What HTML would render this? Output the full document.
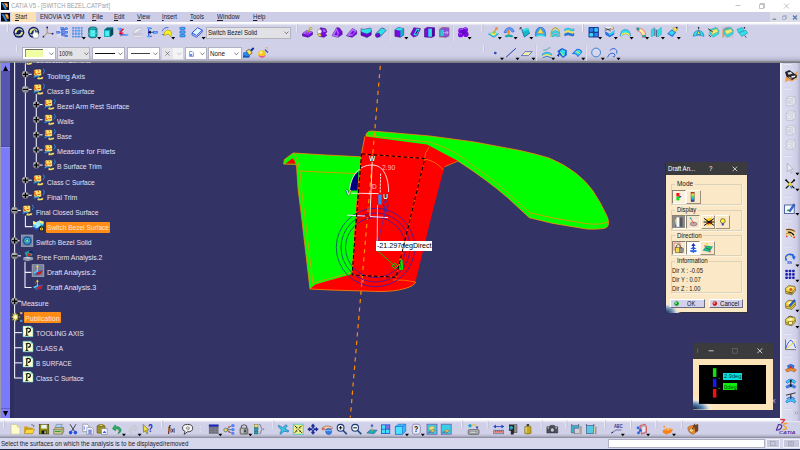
<!DOCTYPE html>
<html lang="en">
<head>
<meta charset="utf-8">
<title>CATIA V5 - [SWITCH BEZEL.CATPart]</title>
<style>
html,body{margin:0;padding:0;}
body{width:800px;height:450px;overflow:hidden;background:#333366;font-family:"Liberation Sans", sans-serif;}
#app{position:relative;width:800px;height:450px;overflow:hidden;background:#333366;}
#app div,#app span,#app svg{box-sizing:border-box;}
svg{overflow:visible;}
</style>
</head>
<body>
<div id="app">
<!-- viewport background -->
<div id="viewport" style="position:absolute;left:0;top:62px;width:780px;height:356px;background:#333366;"></div>
<!-- title bar -->
<div id="titlebar" style="position:absolute;left:0;top:0;width:800px;height:12px;background:#ffffff;"><svg style="position:absolute;left:1px;top:2px" width="8" height="8" viewBox="0 0 8 8"><rect width="8" height="8" fill="#0a0a14"/><path d="M0.5 1 L3 1.5 L6 7.5 L4 7.5 Z" fill="#2a8ae6"/><path d="M3 1 L6.5 1.5 L7 5 L5.5 5.5 Z" fill="#f08a20"/><path d="M4 2 L6 2.5 L6 4 Z" fill="#ffd890"/></svg><span style="position:absolute;left:11.3px;top:1.40px;font-size:7px;line-height:9px;color:#a0a0a0;font-weight:400;white-space:pre;transform:scaleX(0.8228);transform-origin:0 0;">CATIA V5 - [SWITCH BEZEL.CATPart]</span><svg style="position:absolute;left:730px;top:0" width="70" height="12" viewBox="0 0 70 12"><path d="M5.5 5.5 H10.5" stroke="#9a9a9a" stroke-width="0.6" fill="none"/><path d="M29.5 4.5 h4 v4 h-4 z M30.5 4.5 v-1 h4 v4 h-1" stroke="#9a9a9a" stroke-width="0.6" fill="none"/><path d="M54 3.5 l5 5 M59 3.5 l-5 5" stroke="#9a9a9a" stroke-width="0.6" fill="none"/></svg></div>
<!-- menu bar -->
<div id="menubar" style="position:absolute;left:0;top:12px;width:800px;height:10.5px;background:#cdcde8;"><svg style="position:absolute;left:1px;top:1px" width="9" height="8.5" viewBox="0 0 9 8.5"><rect width="9" height="8.5" fill="#0a0a14"/><path d="M0.5 1 L3 1.5 L6.5 8 L4.5 8 Z" fill="#2a8ae6"/><path d="M3.5 1 L7 1.5 L8 5.5 L6 6 Z" fill="#f08a20"/><path d="M4.5 2 L6.5 2.5 L6.5 4.5 Z" fill="#ffd890"/></svg><div style="position:absolute;left:11px;top:0;width:25px;height:10.5px;background:#fde0b4;"></div><div style="position:absolute;left:770px;top:0;width:30px;height:10.5px;background:#dcdce8;"></div><svg style="position:absolute;left:770px;top:0" width="30" height="11" viewBox="0 0 30 11"><path d="M2.6 7.2 h3.6" stroke="#6078a8" stroke-width="1.1" fill="none"/><path d="M12.5 4.5 h3 v3 h-3 z M13.5 4.5 v-1 h3 v3 h-1" stroke="#8c9cbc" stroke-width="0.6" fill="none"/><path d="M23 3.5 l4 4 M27 3.5 l-4 4" stroke="#5078a8" stroke-width="1.1" fill="none"/></svg></div><span style="position:absolute;left:14.7px;top:12.40px;font-size:7.2px;line-height:9.2px;color:#1a1a2a;font-weight:400;white-space:pre;transform:scaleX(0.8033);transform-origin:0 0;"><u>S</u>tart</span><span style="position:absolute;left:39.8px;top:12.40px;font-size:7.2px;line-height:9.2px;color:#1a1a2a;font-weight:400;white-space:pre;transform:scaleX(0.8073);transform-origin:0 0;">ENOVIA V5 VPM</span><span style="position:absolute;left:92px;top:12.40px;font-size:7.2px;line-height:9.2px;color:#1a1a2a;font-weight:400;white-space:pre;transform:scaleX(0.9488);transform-origin:0 0;"><u>F</u>ile</span><span style="position:absolute;left:113.5px;top:12.40px;font-size:7.2px;line-height:9.2px;color:#1a1a2a;font-weight:400;white-space:pre;transform:scaleX(0.8474);transform-origin:0 0;"><u>E</u>dit</span><span style="position:absolute;left:136.5px;top:12.40px;font-size:7.2px;line-height:9.2px;color:#1a1a2a;font-weight:400;white-space:pre;transform:scaleX(0.8413);transform-origin:0 0;"><u>V</u>iew</span><span style="position:absolute;left:162px;top:12.40px;font-size:7.2px;line-height:9.2px;color:#1a1a2a;font-weight:400;white-space:pre;transform:scaleX(0.8341);transform-origin:0 0;"><u>I</u>nsert</span><span style="position:absolute;left:190px;top:12.40px;font-size:7.2px;line-height:9.2px;color:#1a1a2a;font-weight:400;white-space:pre;transform:scaleX(0.8343);transform-origin:0 0;"><u>T</u>ools</span><span style="position:absolute;left:217px;top:12.40px;font-size:7.2px;line-height:9.2px;color:#1a1a2a;font-weight:400;white-space:pre;transform:scaleX(0.8797);transform-origin:0 0;"><u>W</u>indow</span><span style="position:absolute;left:252.5px;top:12.40px;font-size:7.2px;line-height:9.2px;color:#1a1a2a;font-weight:400;white-space:pre;transform:scaleX(0.8448);transform-origin:0 0;"><u>H</u>elp</span>
<!-- toolbar backgrounds -->
<div id="toolbar-top" style="position:absolute;left:0;top:22px;width:800px;height:40.6px;background:linear-gradient(to bottom,#ffffff 0,#ffffff 1.2px,#e4e4f2 2.4px,#d0d0e8 3.8px,#d0d0e8 33px,#c4c4dc 36px,#b0b0c8 38.4px,#8c8c98 39.2px,#7c7c84 40.6px);"></div><div id="toolbar-bottom" style="position:absolute;left:0;top:417.7px;width:800px;height:20.6px;background:linear-gradient(to bottom,#ffffff 0,#ffffff 2px,#e6e6f4 3.4px,#d0d0e8 4.8px,#d0d0e8 15.6px,#bcbcd2 17.6px,#a0a0b4 19px,#8a8a98 19.8px,#b4b4c8 20.6px);"></div><div id="toolbar-right" style="position:absolute;left:779.8px;top:62.6px;width:20.2px;height:358.6px;background:linear-gradient(to right,#ffffff 0,#f4f4fc 1.2px,#dcdcf0 2.6px,#d6d6ee 12px,#ccccE4 17px,#b0b0c8 20.2px);"></div><div id="statusbar" style="position:absolute;left:0;top:438.3px;width:800px;height:11.7px;background:#d6d6ec;"></div>
<!-- 3D model -->
<svg style="position:absolute;left:0px;top:0px;pointer-events:none" width="800" height="450" viewBox="0 0 800 450"><path d="M283.6,164 L284.3,159.6 L293.2,153 L326,155 L361.3,156.8 L358,187 L355.5,220 L352,274.5 L315.5,284.5 L310,289 L301,212 L298.2,190 L297,173 Q296.8,166 296,164.4 Z" fill="#00ff00" stroke="#ff8c00" stroke-width="0.8" stroke-linejoin="round"/><path d="M285.6,163.4 L292.7,158.2 Q294.6,160 295.5,163.8 Z" fill="#ff0000"/><path d="M293.4,153.4 Q297,157 297.9,162 Q299.6,168 300,171.5 L301.6,190 L304.5,213 L313,284" stroke="#ff8c00" stroke-width="0.7" fill="none"/><path d="M300,171 L326,172.3 L357.5,173.6" stroke="#ff8c00" stroke-width="0.8" fill="none"/><path d="M313,283 L351.5,272.3" stroke="#ff8c00" stroke-width="0.6" fill="none"/><path d="M366,134 Q368,130.5 372,131 L430,136 L474.4,142 L520,150.5 Q536,154 549,158 Q564,164 575.5,173 Q586,181 593,191 Q601,203 606.7,215.5 Q609,220 608.4,224 Q608,228 603,228.6 Q596,229.5 586.7,229 L553,223.4 L529.4,217.8 L507.8,197.8 Q497,188.5 485.5,180 Q472,170 458,161 L430,148 L366,137 Z" fill="#00ff00" stroke="#ff8c00" stroke-width="0.8" stroke-linejoin="round"/><path d="M529.4,217.8 L530,212.8 L553,218 L586,223.6 Q600,225.4 608.4,221.6" stroke="#ff8c00" stroke-width="0.8" fill="none"/><path d="M366,135.5 L430,142.2 Q442,146 452,151 Q464,158 474.4,166.7 Q490,177 503.3,188.9 L530,212.8" stroke="#ff8c00" stroke-width="0.7" fill="none"/><path d="M364.5,136.5 L366,136.5 L427,144.5 L458,161 L444.5,166.8 L433,210 L415.5,282 Q414,286 405,288.5 Q395,291.5 380,291.5 L330,290 L310,289 L315.5,284.5 L352,274 L355.5,220 L358,187 L361.4,155 Z" fill="#ff0000"/><path d="M310,289 L330,290 L380,291.5 Q395,291.5 405,288.5 Q414,286 415.5,282" stroke="#ff8c00" stroke-width="0.8" fill="none"/><path d="M393,280 Q405,279.5 415.5,282" stroke="#ff8c00" stroke-width="0.7" fill="none"/><path d="M364.8,136.5 L361.6,153.5" stroke="#ff8c00" stroke-width="0.8" fill="none"/><path d="M429,147.5 Q425,152 424.4,159 Q436,161 443.5,170" stroke="#ff8c00" stroke-width="0.7" fill="none"/><path d="M444.5,166.8 L458,161" stroke="#ff8c00" stroke-width="0.7" fill="none"/><path d="M380.3,65.8 L350.3,417.5" stroke="#ff8c00" stroke-width="1.2" stroke-dasharray="4.2 4.16" fill="none"/><defs><clipPath id="clipG"><path d="M280,150 L361.6,153 L352,275 L310,290 Z"/></clipPath><clipPath id="clipR"><path d="M361.6,153 L460,150 L440,300 L310,300 L310,290 L352,275 Z"/></clipPath></defs><g fill="none" stroke="#0c6c54" stroke-width="1" clip-path="url(#clipG)"><circle cx="375.5" cy="247.5" r="30"/><circle cx="375.5" cy="247.5" r="34.5"/><circle cx="375.5" cy="247.5" r="39.2"/></g><g fill="none" stroke="#3020a8" stroke-width="0.8" clip-path="url(#clipR)"><circle cx="375.5" cy="247.5" r="30"/><circle cx="375.5" cy="247.5" r="34.5"/><circle cx="375.5" cy="247.5" r="39.2"/></g><path d="M358.5,171.5 Q351,176 349.5,190.5 L357.5,190.5 Z" fill="#000080"/><g fill="none" stroke="#fff0f4" stroke-width="0.9"><path d="M349.5,191 C351,174 360,165 372,165 C383,165 388.5,176 388.6,192"/><path d="M372.2,162 L370,216"/><path d="M351,193.2 L378.5,193.6"/></g><path d="M380.6,173.5 L380.2,193" stroke="#ffe8e8" stroke-width="0.9" stroke-dasharray="2.5 0.8" fill="none"/><path d="M377.5,205 L377.2,241" stroke="#ffe8ec" stroke-width="0.8" fill="none"/><g fill="none" stroke="#f0e0ff" stroke-width="1"><path d="M347,215.2 L365,216"/><path d="M370,216.5 L388,217.6"/></g><circle cx="367.5" cy="216" r="1.3" fill="#c00000"/><rect x="378.3" y="194.6" width="3.2" height="10" fill="#2a90ff"/><path d="M385.8,199 L388.5,206 L387,206 L386.5,212 L384.3,212 L384.6,206 L383,206 Z" fill="none" stroke="#2030c0" stroke-width="0.7"/><path d="M385.3,212 L377.5,243" stroke="#3838c8" stroke-width="0.7" fill="none"/><path d="M361,279.5 l3,3 m0,-3 l-3,3" stroke="#ffc0c0" stroke-width="0.6" fill="none"/><path d="M377.5,250.5 L396,267" stroke="#00d000" stroke-width="0.9" fill="none"/><path d="M391.8,266 l3.2,-2.8 l3.2,2.8 l-3.2,2.8 z" fill="none" stroke="#00e000" stroke-width="0.9"/><path d="M398.8,259.6 l3.6,0 l0.8,10 l-3.6,0.6 z" fill="#00f000"/><path d="M399.6,261 L401.4,268.6" stroke="#006000" stroke-width="0.7" fill="none"/></svg><span style="position:absolute;left:368.8px;top:153.70px;font-size:7px;line-height:9px;color:#fff;font-weight:700;white-space:pre;transform:scaleX(0.9381);transform-origin:0 0;text-shadow:0 0 1px #000,0 0 1px #000;">W</span><span style="position:absolute;left:346px;top:187.50px;font-size:7px;line-height:9px;color:#fff;font-weight:700;white-space:pre;transform:scaleX(1.0702);transform-origin:0 0;text-shadow:0 0 1px #000,0 0 1px #000;">V</span><span style="position:absolute;left:383.2px;top:191.50px;font-size:7px;line-height:9px;color:#fff;font-weight:700;white-space:pre;transform:scaleX(0.9877);transform-origin:0 0;text-shadow:0 0 1px #000,0 0 1px #000;">U</span><span style="position:absolute;left:372px;top:182.45px;font-size:7.5px;line-height:9.5px;color:#ffc8c8;font-weight:400;white-space:pre;transform:scaleX(0.8484);transform-origin:0 0;">D</span><span style="position:absolute;left:381.8px;top:162.65px;font-size:7.5px;line-height:9.5px;color:#ffb8b8;font-weight:400;white-space:pre;transform:scaleX(0.9035);transform-origin:0 0;">2.90</span><div style="position:absolute;left:376px;top:240.5px;width:56px;height:10px;background:#ffffff;"></div><span style="position:absolute;left:376.8px;top:240.85px;font-size:7.5px;line-height:9.5px;color:#000;font-weight:400;white-space:pre;transform:scaleX(0.9471);transform-origin:0 0;">-21.297degDirect</span><svg style="position:absolute;left:0px;top:0px;pointer-events:none" width="800" height="450" viewBox="0 0 800 450"><path d="M361.5,153.9 L424.8,158.5 L396,277.3 L352,275 Z" stroke="#000" stroke-width="1" stroke-dasharray="4 2" fill="none"/><path d="M361.5,153.9 L424.8,158.5 L396,277.3 L352,275 Z" stroke="#ff8c00" stroke-width="0.6" stroke-dasharray="2 4" stroke-dashoffset="-4" fill="none"/></svg>
<!-- specification tree -->
<div id="tree-scroll" style="position:absolute;left:0;top:62.6px;width:10.1px;height:355.1px;background:#5656b0;border-left:1px solid #9c9ca8;"><div class="scroll-up" style="position:absolute;left:0;top:0;width:9.1px;height:9.6px;background:#8080f8;border-bottom:0.6px solid #5050a8;"></div><div class="scroll-thumb" style="position:absolute;left:0;top:84.2px;width:9.1px;height:261.4px;background:#7a7afa;border-top:0.9px solid #9494ff;box-shadow:0 -0.8px 0 #4848a0;"></div><div class="scroll-down" style="position:absolute;left:0;top:345.4px;width:9.1px;height:9.7px;background:#7e7efa;border-top:0.6px solid #6060c8;"></div><svg style="position:absolute;left:-1px;top:0" width="10" height="355" viewBox="0 0 10 355"><path d="M3,8 L5.5,2.8 L8.1,8 Z" fill="#000"/><path d="M3,348.1 L5.5,353.3 L8.1,348.1 Z" fill="#000"/></svg></div><div style="position:absolute;left:10.1px;top:62.6px;width:3.6px;height:355.1px;background:#2e2e60;"></div><svg style="position:absolute;left:0px;top:0px;pointer-events:none" width="800" height="450" viewBox="0 0 800 450"><path d="M14.6,62.5 V378.3" stroke="#eeeeff" stroke-width="1.1" fill="none"/><path d="M25.4,62.5 V196.74" stroke="#eeeeff" stroke-width="1.1" fill="none"/><path d="M36.3,93.83 V166.48000000000002" stroke="#eeeeff" stroke-width="1.1" fill="none"/><path d="M25.4,215.87 V226.6 H32.5" stroke="#eeeeff" stroke-width="1.1" fill="none"/><path d="M25.0,261.76 V287.52000000000004 H31.5 M25.0,272.39 H31.5" stroke="#eeeeff" stroke-width="1.1" fill="none"/><path d="M14.6,332.61 H22" stroke="#eeeeff" stroke-width="1.1" fill="none"/><path d="M14.6,347.74 H22" stroke="#eeeeff" stroke-width="1.1" fill="none"/><path d="M14.6,362.87 H22" stroke="#eeeeff" stroke-width="1.1" fill="none"/><path d="M14.6,378.0 H22" stroke="#eeeeff" stroke-width="1.1" fill="none"/><path d="M28.4,74.3 H31.699999999999996" stroke="#eeeeff" stroke-width="1.1" fill="none"/><circle cx="25.4" cy="74.3" r="3.4" fill="#8a8a8a"/><circle cx="24.799999999999997" cy="73.5" r="2.4" fill="#b4b4b4"/><path d="M22.799999999999997,74.3 H28.0" stroke="#000" stroke-width="1.3"/><path d="M25.4,71.7 V76.89999999999999" stroke="#000" stroke-width="1.3"/><g transform="translate(33.3,69.10) scale(1.06)"><path d="M0.4,1.6 Q0.2,0.2 2,0.1 L6.4,-0.1 Q7.8,0 7.8,1.6 L7.9,6 Q6,7 4,6.6 Q2,7 0.5,6.2 Z" fill="#ffe868" stroke="#1c1c58" stroke-width="0.6"/><path d="M3.4,8.2 Q5,6.8 6.6,7.6 L9.8,7 L9.4,9.4 Q6,10.6 3.8,9.8 Z" fill="#ffe868" stroke="#1c1c58" stroke-width="0.6"/><path d="M1.7,1.4 Q0.9,3 1.8,4.6 L3.2,5" stroke="#e04a10" stroke-width="1.1" fill="none"/><path d="M4.6,0.8 L5.2,2.2 M4,3.8 Q5.4,4.6 6.8,3.6" stroke="#e84818" stroke-width="0.9" fill="none"/><path d="M0.4,7.8 Q2.4,6.2 5.4,6.6" stroke="#30a0e0" stroke-width="1.1" fill="none"/><path d="M1.4,8.8 L3,7.6 M5.8,8.6 L6.8,7.6" stroke="#1838a0" stroke-width="0.7" fill="none"/><path d="M9.6,-0.4 Q11.6,2 9.2,4.6" stroke="#3090d8" stroke-width="0.9" fill="none"/></g><path d="M28.4,89.42999999999999 H31.699999999999996" stroke="#eeeeff" stroke-width="1.1" fill="none"/><circle cx="25.4" cy="89.42999999999999" r="3.4" fill="#8a8a8a"/><circle cx="24.799999999999997" cy="88.63" r="2.4" fill="#b4b4b4"/><path d="M22.799999999999997,89.42999999999999 H28.0" stroke="#000" stroke-width="1.3"/><g transform="translate(33.3,84.23) scale(1.06)"><path d="M0.4,1.6 Q0.2,0.2 2,0.1 L6.4,-0.1 Q7.8,0 7.8,1.6 L7.9,6 Q6,7 4,6.6 Q2,7 0.5,6.2 Z" fill="#ffe868" stroke="#1c1c58" stroke-width="0.6"/><path d="M3.4,8.2 Q5,6.8 6.6,7.6 L9.8,7 L9.4,9.4 Q6,10.6 3.8,9.8 Z" fill="#ffe868" stroke="#1c1c58" stroke-width="0.6"/><path d="M1.7,1.4 Q0.9,3 1.8,4.6 L3.2,5" stroke="#e04a10" stroke-width="1.1" fill="none"/><path d="M4.6,0.8 L5.2,2.2 M4,3.8 Q5.4,4.6 6.8,3.6" stroke="#e84818" stroke-width="0.9" fill="none"/><path d="M0.4,7.8 Q2.4,6.2 5.4,6.6" stroke="#30a0e0" stroke-width="1.1" fill="none"/><path d="M1.4,8.8 L3,7.6 M5.8,8.6 L6.8,7.6" stroke="#1838a0" stroke-width="0.7" fill="none"/><path d="M9.6,-0.4 Q11.6,2 9.2,4.6" stroke="#3090d8" stroke-width="0.9" fill="none"/></g><path d="M39.3,104.56 H42.6" stroke="#eeeeff" stroke-width="1.1" fill="none"/><circle cx="36.3" cy="104.56" r="3.4" fill="#8a8a8a"/><circle cx="35.699999999999996" cy="103.76" r="2.4" fill="#b4b4b4"/><path d="M33.699999999999996,104.56 H38.9" stroke="#000" stroke-width="1.3"/><path d="M36.3,101.96000000000001 V107.16" stroke="#000" stroke-width="1.3"/><g transform="translate(44.2,99.36) scale(1.06)"><path d="M0.4,1.6 Q0.2,0.2 2,0.1 L6.4,-0.1 Q7.8,0 7.8,1.6 L7.9,6 Q6,7 4,6.6 Q2,7 0.5,6.2 Z" fill="#ffe868" stroke="#1c1c58" stroke-width="0.6"/><path d="M3.4,8.2 Q5,6.8 6.6,7.6 L9.8,7 L9.4,9.4 Q6,10.6 3.8,9.8 Z" fill="#ffe868" stroke="#1c1c58" stroke-width="0.6"/><path d="M1.7,1.4 Q0.9,3 1.8,4.6 L3.2,5" stroke="#e04a10" stroke-width="1.1" fill="none"/><path d="M4.6,0.8 L5.2,2.2 M4,3.8 Q5.4,4.6 6.8,3.6" stroke="#e84818" stroke-width="0.9" fill="none"/><path d="M0.4,7.8 Q2.4,6.2 5.4,6.6" stroke="#30a0e0" stroke-width="1.1" fill="none"/><path d="M1.4,8.8 L3,7.6 M5.8,8.6 L6.8,7.6" stroke="#1838a0" stroke-width="0.7" fill="none"/><path d="M9.6,-0.4 Q11.6,2 9.2,4.6" stroke="#3090d8" stroke-width="0.9" fill="none"/></g><path d="M39.3,119.69 H42.6" stroke="#eeeeff" stroke-width="1.1" fill="none"/><circle cx="36.3" cy="119.69" r="3.4" fill="#8a8a8a"/><circle cx="35.699999999999996" cy="118.89" r="2.4" fill="#b4b4b4"/><path d="M33.699999999999996,119.69 H38.9" stroke="#000" stroke-width="1.3"/><path d="M36.3,117.09 V122.28999999999999" stroke="#000" stroke-width="1.3"/><g transform="translate(44.2,114.49) scale(1.06)"><path d="M0.4,1.6 Q0.2,0.2 2,0.1 L6.4,-0.1 Q7.8,0 7.8,1.6 L7.9,6 Q6,7 4,6.6 Q2,7 0.5,6.2 Z" fill="#ffe868" stroke="#1c1c58" stroke-width="0.6"/><path d="M3.4,8.2 Q5,6.8 6.6,7.6 L9.8,7 L9.4,9.4 Q6,10.6 3.8,9.8 Z" fill="#ffe868" stroke="#1c1c58" stroke-width="0.6"/><path d="M1.7,1.4 Q0.9,3 1.8,4.6 L3.2,5" stroke="#e04a10" stroke-width="1.1" fill="none"/><path d="M4.6,0.8 L5.2,2.2 M4,3.8 Q5.4,4.6 6.8,3.6" stroke="#e84818" stroke-width="0.9" fill="none"/><path d="M0.4,7.8 Q2.4,6.2 5.4,6.6" stroke="#30a0e0" stroke-width="1.1" fill="none"/><path d="M1.4,8.8 L3,7.6 M5.8,8.6 L6.8,7.6" stroke="#1838a0" stroke-width="0.7" fill="none"/><path d="M9.6,-0.4 Q11.6,2 9.2,4.6" stroke="#3090d8" stroke-width="0.9" fill="none"/></g><path d="M39.3,134.82 H42.6" stroke="#eeeeff" stroke-width="1.1" fill="none"/><circle cx="36.3" cy="134.82" r="3.4" fill="#8a8a8a"/><circle cx="35.699999999999996" cy="134.01999999999998" r="2.4" fill="#b4b4b4"/><path d="M33.699999999999996,134.82 H38.9" stroke="#000" stroke-width="1.3"/><path d="M36.3,132.22 V137.42" stroke="#000" stroke-width="1.3"/><g transform="translate(44.2,129.62) scale(1.06)"><path d="M0.4,1.6 Q0.2,0.2 2,0.1 L6.4,-0.1 Q7.8,0 7.8,1.6 L7.9,6 Q6,7 4,6.6 Q2,7 0.5,6.2 Z" fill="#ffe868" stroke="#1c1c58" stroke-width="0.6"/><path d="M3.4,8.2 Q5,6.8 6.6,7.6 L9.8,7 L9.4,9.4 Q6,10.6 3.8,9.8 Z" fill="#ffe868" stroke="#1c1c58" stroke-width="0.6"/><path d="M1.7,1.4 Q0.9,3 1.8,4.6 L3.2,5" stroke="#e04a10" stroke-width="1.1" fill="none"/><path d="M4.6,0.8 L5.2,2.2 M4,3.8 Q5.4,4.6 6.8,3.6" stroke="#e84818" stroke-width="0.9" fill="none"/><path d="M0.4,7.8 Q2.4,6.2 5.4,6.6" stroke="#30a0e0" stroke-width="1.1" fill="none"/><path d="M1.4,8.8 L3,7.6 M5.8,8.6 L6.8,7.6" stroke="#1838a0" stroke-width="0.7" fill="none"/><path d="M9.6,-0.4 Q11.6,2 9.2,4.6" stroke="#3090d8" stroke-width="0.9" fill="none"/></g><path d="M39.3,149.95000000000002 H42.6" stroke="#eeeeff" stroke-width="1.1" fill="none"/><circle cx="36.3" cy="149.95000000000002" r="3.4" fill="#8a8a8a"/><circle cx="35.699999999999996" cy="149.15" r="2.4" fill="#b4b4b4"/><path d="M33.699999999999996,149.95000000000002 H38.9" stroke="#000" stroke-width="1.3"/><path d="M36.3,147.35000000000002 V152.55" stroke="#000" stroke-width="1.3"/><g transform="translate(44.2,144.75) scale(1.06)"><path d="M0.4,1.6 Q0.2,0.2 2,0.1 L6.4,-0.1 Q7.8,0 7.8,1.6 L7.9,6 Q6,7 4,6.6 Q2,7 0.5,6.2 Z" fill="#ffe868" stroke="#1c1c58" stroke-width="0.6"/><path d="M3.4,8.2 Q5,6.8 6.6,7.6 L9.8,7 L9.4,9.4 Q6,10.6 3.8,9.8 Z" fill="#ffe868" stroke="#1c1c58" stroke-width="0.6"/><path d="M1.7,1.4 Q0.9,3 1.8,4.6 L3.2,5" stroke="#e04a10" stroke-width="1.1" fill="none"/><path d="M4.6,0.8 L5.2,2.2 M4,3.8 Q5.4,4.6 6.8,3.6" stroke="#e84818" stroke-width="0.9" fill="none"/><path d="M0.4,7.8 Q2.4,6.2 5.4,6.6" stroke="#30a0e0" stroke-width="1.1" fill="none"/><path d="M1.4,8.8 L3,7.6 M5.8,8.6 L6.8,7.6" stroke="#1838a0" stroke-width="0.7" fill="none"/><path d="M9.6,-0.4 Q11.6,2 9.2,4.6" stroke="#3090d8" stroke-width="0.9" fill="none"/></g><path d="M39.3,165.08 H42.6" stroke="#eeeeff" stroke-width="1.1" fill="none"/><circle cx="36.3" cy="165.08" r="3.4" fill="#8a8a8a"/><circle cx="35.699999999999996" cy="164.28" r="2.4" fill="#b4b4b4"/><path d="M33.699999999999996,165.08 H38.9" stroke="#000" stroke-width="1.3"/><path d="M36.3,162.48000000000002 V167.68" stroke="#000" stroke-width="1.3"/><g transform="translate(44.2,159.88) scale(1.06)"><path d="M0.4,1.6 Q0.2,0.2 2,0.1 L6.4,-0.1 Q7.8,0 7.8,1.6 L7.9,6 Q6,7 4,6.6 Q2,7 0.5,6.2 Z" fill="#ffe868" stroke="#1c1c58" stroke-width="0.6"/><path d="M3.4,8.2 Q5,6.8 6.6,7.6 L9.8,7 L9.4,9.4 Q6,10.6 3.8,9.8 Z" fill="#ffe868" stroke="#1c1c58" stroke-width="0.6"/><path d="M1.7,1.4 Q0.9,3 1.8,4.6 L3.2,5" stroke="#e04a10" stroke-width="1.1" fill="none"/><path d="M4.6,0.8 L5.2,2.2 M4,3.8 Q5.4,4.6 6.8,3.6" stroke="#e84818" stroke-width="0.9" fill="none"/><path d="M0.4,7.8 Q2.4,6.2 5.4,6.6" stroke="#30a0e0" stroke-width="1.1" fill="none"/><path d="M1.4,8.8 L3,7.6 M5.8,8.6 L6.8,7.6" stroke="#1838a0" stroke-width="0.7" fill="none"/><path d="M9.6,-0.4 Q11.6,2 9.2,4.6" stroke="#3090d8" stroke-width="0.9" fill="none"/></g><path d="M28.4,180.21 H31.699999999999996" stroke="#eeeeff" stroke-width="1.1" fill="none"/><circle cx="25.4" cy="180.21" r="3.4" fill="#8a8a8a"/><circle cx="24.799999999999997" cy="179.41" r="2.4" fill="#b4b4b4"/><path d="M22.799999999999997,180.21 H28.0" stroke="#000" stroke-width="1.3"/><path d="M25.4,177.61 V182.81" stroke="#000" stroke-width="1.3"/><g transform="translate(33.3,175.01) scale(1.06)"><path d="M0.4,1.6 Q0.2,0.2 2,0.1 L6.4,-0.1 Q7.8,0 7.8,1.6 L7.9,6 Q6,7 4,6.6 Q2,7 0.5,6.2 Z" fill="#ffe868" stroke="#1c1c58" stroke-width="0.6"/><path d="M3.4,8.2 Q5,6.8 6.6,7.6 L9.8,7 L9.4,9.4 Q6,10.6 3.8,9.8 Z" fill="#ffe868" stroke="#1c1c58" stroke-width="0.6"/><path d="M1.7,1.4 Q0.9,3 1.8,4.6 L3.2,5" stroke="#e04a10" stroke-width="1.1" fill="none"/><path d="M4.6,0.8 L5.2,2.2 M4,3.8 Q5.4,4.6 6.8,3.6" stroke="#e84818" stroke-width="0.9" fill="none"/><path d="M0.4,7.8 Q2.4,6.2 5.4,6.6" stroke="#30a0e0" stroke-width="1.1" fill="none"/><path d="M1.4,8.8 L3,7.6 M5.8,8.6 L6.8,7.6" stroke="#1838a0" stroke-width="0.7" fill="none"/><path d="M9.6,-0.4 Q11.6,2 9.2,4.6" stroke="#3090d8" stroke-width="0.9" fill="none"/></g><path d="M28.4,195.34 H31.699999999999996" stroke="#eeeeff" stroke-width="1.1" fill="none"/><circle cx="25.4" cy="195.34" r="3.4" fill="#8a8a8a"/><circle cx="24.799999999999997" cy="194.54" r="2.4" fill="#b4b4b4"/><path d="M22.799999999999997,195.34 H28.0" stroke="#000" stroke-width="1.3"/><path d="M25.4,192.74 V197.94" stroke="#000" stroke-width="1.3"/><g transform="translate(33.3,190.14) scale(1.06)"><path d="M0.4,1.6 Q0.2,0.2 2,0.1 L6.4,-0.1 Q7.8,0 7.8,1.6 L7.9,6 Q6,7 4,6.6 Q2,7 0.5,6.2 Z" fill="#ffe868" stroke="#1c1c58" stroke-width="0.6"/><path d="M3.4,8.2 Q5,6.8 6.6,7.6 L9.8,7 L9.4,9.4 Q6,10.6 3.8,9.8 Z" fill="#ffe868" stroke="#1c1c58" stroke-width="0.6"/><path d="M1.7,1.4 Q0.9,3 1.8,4.6 L3.2,5" stroke="#e04a10" stroke-width="1.1" fill="none"/><path d="M4.6,0.8 L5.2,2.2 M4,3.8 Q5.4,4.6 6.8,3.6" stroke="#e84818" stroke-width="0.9" fill="none"/><path d="M0.4,7.8 Q2.4,6.2 5.4,6.6" stroke="#30a0e0" stroke-width="1.1" fill="none"/><path d="M1.4,8.8 L3,7.6 M5.8,8.6 L6.8,7.6" stroke="#1838a0" stroke-width="0.7" fill="none"/><path d="M9.6,-0.4 Q11.6,2 9.2,4.6" stroke="#3090d8" stroke-width="0.9" fill="none"/></g><path d="M17.6,210.47 H20.7" stroke="#eeeeff" stroke-width="1.1" fill="none"/><circle cx="14.6" cy="210.47" r="3.4" fill="#8a8a8a"/><circle cx="14.0" cy="209.67" r="2.4" fill="#b4b4b4"/><path d="M12.0,210.47 H17.2" stroke="#000" stroke-width="1.3"/><g transform="translate(22.3,205.27) scale(1.06)"><path d="M0.4,1.6 Q0.2,0.2 2,0.1 L6.4,-0.1 Q7.8,0 7.8,1.6 L7.9,6 Q6,7 4,6.6 Q2,7 0.5,6.2 Z" fill="#ffe868" stroke="#1c1c58" stroke-width="0.6"/><path d="M3.4,8.2 Q5,6.8 6.6,7.6 L9.8,7 L9.4,9.4 Q6,10.6 3.8,9.8 Z" fill="#ffe868" stroke="#1c1c58" stroke-width="0.6"/><path d="M1.7,1.4 Q0.9,3 1.8,4.6 L3.2,5" stroke="#e04a10" stroke-width="1.1" fill="none"/><path d="M4.6,0.8 L5.2,2.2 M4,3.8 Q5.4,4.6 6.8,3.6" stroke="#e84818" stroke-width="0.9" fill="none"/><path d="M0.4,7.8 Q2.4,6.2 5.4,6.6" stroke="#30a0e0" stroke-width="1.1" fill="none"/><path d="M1.4,8.8 L3,7.6 M5.8,8.6 L6.8,7.6" stroke="#1838a0" stroke-width="0.7" fill="none"/><path d="M9.6,-0.4 Q11.6,2 9.2,4.6" stroke="#3090d8" stroke-width="0.9" fill="none"/></g><g transform="translate(32.6,219.60) scale(1)"><path d="M0.4,1.4 L3.6,2.6 L7,0.8 L11,2.2 L10.6,7.6 L7.4,6.4 L4,8.8 L0.6,7.4 Z" fill="#58d8f0"/><path d="M0.4,1.4 L3.6,2.6 L3.8,5.4 L0.6,4.4 Z" fill="#fff070"/><path d="M7,0.8 L11,2.2 L10.8,4.4 L7.2,3.2 Z" fill="#fff070"/><path d="M0.6,7.4 L4,8.8 L7.4,6.4 L7.4,8 L4,10.6 L0.6,9 Z" fill="#1850d0"/><path d="M3.6,2.6 L7,0.8 L7.4,6.4 L4,8.8 Z" fill="#a8ecff"/><rect x="7.2" y="7.6" width="3.8" height="3.6" fill="#f8e040" stroke="#000" stroke-width="0.7"/><path d="M8,7.6 V6.6 Q9.1,5.4 10.2,6.6 V7.6" stroke="#000" stroke-width="0.7" fill="none"/><rect x="8.6" y="8.8" width="1" height="1.2" fill="#000"/></g><path d="M17.6,240.73 H19.599999999999998" stroke="#eeeeff" stroke-width="1.1" fill="none"/><circle cx="14.6" cy="240.73" r="3.4" fill="#8a8a8a"/><circle cx="14.0" cy="239.92999999999998" r="2.4" fill="#b4b4b4"/><path d="M12.0,240.73 H17.2" stroke="#000" stroke-width="1.3"/><path d="M14.6,238.13 V243.32999999999998" stroke="#000" stroke-width="1.3"/><g transform="translate(21.2,234.73) scale(1)"><rect x="0" y="0" width="12" height="12" fill="#7c84a0"/><rect x="0.4" y="0.4" width="11.2" height="11.2" fill="none" stroke="#aab0c4" stroke-width="0.6"/><circle cx="6" cy="6" r="4.6" fill="#1c5c98"/><path d="M6,1.4 V10.6 M2,3.7 L10,8.3 M2,8.3 L10,3.7" stroke="#30c0c0" stroke-width="0.9"/><circle cx="6" cy="6" r="2.6" fill="none" stroke="#58e0e0" stroke-width="0.7"/><circle cx="6" cy="2.4" r="0.8" fill="#2040b0"/><circle cx="9.1" cy="4.2" r="0.8" fill="#2040b0"/><circle cx="9.1" cy="7.8" r="0.8" fill="#2040b0"/><circle cx="6" cy="9.6" r="0.8" fill="#2040b0"/><circle cx="2.9" cy="7.8" r="0.8" fill="#2040b0"/><circle cx="2.9" cy="4.2" r="0.8" fill="#2040b0"/><circle cx="6" cy="6" r="0.9" fill="#d8d060"/></g><path d="M17.6,255.85999999999999 H21.0" stroke="#eeeeff" stroke-width="1.1" fill="none"/><circle cx="14.6" cy="255.85999999999999" r="3.4" fill="#8a8a8a"/><circle cx="14.0" cy="255.05999999999997" r="2.4" fill="#b4b4b4"/><path d="M12.0,255.85999999999999 H17.2" stroke="#000" stroke-width="1.3"/><g transform="translate(22.6,250.26) scale(1)"><path d="M2,2.4 L6.4,0.2 L11.4,1.6 L9,5.6 L4.2,6.6 Z" fill="#18a8a0"/><path d="M6.4,0.2 L11.4,1.6 L10.4,3.4 L6.2,2.4 Z" fill="#101870"/><path d="M4.6,3 L8.4,3.6 L7.6,6 L4.6,5.6 Z" fill="#e02010"/><path d="M0.6,7.6 L4.4,6.4 L10.6,7.4 L10.6,9.6 L4.8,11 L0.6,9.8 Z" fill="#9098a8"/><path d="M0.6,7.6 L4.4,6.4 L10.6,7.4 L6,8.6 Z" fill="#c0c8d8"/></g><g transform="translate(31.8,264.39) scale(1)"><rect x="0" y="0" width="12.4" height="12.4" fill="#7a8098"/><rect x="0.4" y="0.4" width="11.6" height="11.6" fill="none" stroke="#a8b0c4" stroke-width="0.6"/><path d="M1.4,8 L5,6.4 L11,5.6 L9.4,9.4 L4.6,11.2 Z" fill="#1880d8"/><path d="M4.6,8.4 L11,5.6 L9.4,9.4 L5,10.8 Z" fill="#d01828"/><path d="M1.4,8 L5,6.4 L6.4,7 L2.6,8.8 Z" fill="#60d0f0"/><path d="M5.6,2 V7" stroke="#e8e8f0" stroke-width="0.7"/><path d="M4.2,2.6 L5.6,0.4 L7,2.6 Z" fill="#f8e020"/><path d="M3,4.4 L4.4,4 M3.4,2.8 l0.8,0.6" stroke="#ff4040" stroke-width="0.7"/></g><g transform="translate(31.8,279.12) scale(1)"><path d="M1.4,8 L5,6.4 L11,5.6 L9.4,9.4 L4.6,11.2 Z" fill="#1880d8"/><path d="M4.6,8.4 L11,5.6 L9.4,9.4 L5,10.8 Z" fill="#d01828"/><path d="M1.4,8 L5,6.4 L6.4,7 L2.6,8.8 Z" fill="#60d0f0"/><path d="M5.6,2 V7" stroke="#e8e8f0" stroke-width="0.7"/><path d="M4.2,2.6 L5.6,0.4 L7,2.6 Z" fill="#f8e020"/><path d="M3,4.4 L4.4,4 M3.4,2.8 l0.8,0.6" stroke="#ff4040" stroke-width="0.7"/></g><path d="M17.6,301.25000000000006 H21" stroke="#eeeeff" stroke-width="1.1" fill="none"/><circle cx="14.6" cy="301.25000000000006" r="3.4" fill="#8a8a8a"/><circle cx="14.0" cy="300.45000000000005" r="2.4" fill="#b4b4b4"/><path d="M12.0,301.25000000000006 H17.2" stroke="#000" stroke-width="1.3"/><path d="M14.6,298.65000000000003 V303.8500000000001" stroke="#000" stroke-width="1.3"/><g transform="translate(11.2,311.58) scale(1)"><path d="M4.4,0.4 L5.4,3 L8,1.6 L6.8,4.2 L9.4,5.4 L6.8,6.4 L8,9.2 L5.4,7.8 L4.4,10.6 L3.4,7.8 L0.8,9.2 L2,6.4 L-0.4,5.4 L2,4.2 L0.8,1.6 L3.4,3 Z" fill="#f4e44c" stroke="#404020" stroke-width="0.4"/><circle cx="4.4" cy="5.4" r="1.7" fill="#fffbd0"/><path d="M7,1.6 H9 M7,1.6 V9.4 M7,9.4 H9" stroke="#101010" stroke-width="0.8" fill="none"/><rect x="8.6" y="0.4" width="2.8" height="2.2" rx="0.6" fill="#f0b0a0" stroke="#503030" stroke-width="0.4"/><rect x="8.6" y="8.2" width="2.8" height="2.2" rx="0.6" fill="#58a0f0" stroke="#203060" stroke-width="0.4"/></g><g transform="translate(22.6,325.71) scale(1)"><path d="M0.4,0.4 H8 L10.4,2.6 V11 H0.4 Z" fill="#ffffc8"/><path d="M8,0.4 L10.4,2.6 H8 Z" fill="#40d8e8"/><path d="M0.4,0.4 H8 L10.4,2.6 V11 H0.4 Z" fill="none" stroke="#40c8d8" stroke-width="0.5"/><path d="M4.2,9.6 V3.2 Q4.2,2.4 5.4,2.4 Q7.8,2.4 7.8,4.4 Q7.8,6.4 5.4,6.4" stroke="#000" stroke-width="1.1" fill="none"/><path d="M2.8,9.6 H5.8 M3,3 H4.4" stroke="#000" stroke-width="0.8"/></g><g transform="translate(22.6,340.84) scale(1)"><path d="M0.4,0.4 H8 L10.4,2.6 V11 H0.4 Z" fill="#ffffc8"/><path d="M8,0.4 L10.4,2.6 H8 Z" fill="#40d8e8"/><path d="M0.4,0.4 H8 L10.4,2.6 V11 H0.4 Z" fill="none" stroke="#40c8d8" stroke-width="0.5"/><path d="M4.2,9.6 V3.2 Q4.2,2.4 5.4,2.4 Q7.8,2.4 7.8,4.4 Q7.8,6.4 5.4,6.4" stroke="#000" stroke-width="1.1" fill="none"/><path d="M2.8,9.6 H5.8 M3,3 H4.4" stroke="#000" stroke-width="0.8"/></g><g transform="translate(22.6,355.97) scale(1)"><path d="M0.4,0.4 H8 L10.4,2.6 V11 H0.4 Z" fill="#ffffc8"/><path d="M8,0.4 L10.4,2.6 H8 Z" fill="#40d8e8"/><path d="M0.4,0.4 H8 L10.4,2.6 V11 H0.4 Z" fill="none" stroke="#40c8d8" stroke-width="0.5"/><path d="M4.2,9.6 V3.2 Q4.2,2.4 5.4,2.4 Q7.8,2.4 7.8,4.4 Q7.8,6.4 5.4,6.4" stroke="#000" stroke-width="1.1" fill="none"/><path d="M2.8,9.6 H5.8 M3,3 H4.4" stroke="#000" stroke-width="0.8"/></g><g transform="translate(22.6,371.10) scale(1)"><path d="M0.4,0.4 H8 L10.4,2.6 V11 H0.4 Z" fill="#ffffc8"/><path d="M8,0.4 L10.4,2.6 H8 Z" fill="#40d8e8"/><path d="M0.4,0.4 H8 L10.4,2.6 V11 H0.4 Z" fill="none" stroke="#40c8d8" stroke-width="0.5"/><path d="M4.2,9.6 V3.2 Q4.2,2.4 5.4,2.4 Q7.8,2.4 7.8,4.4 Q7.8,6.4 5.4,6.4" stroke="#000" stroke-width="1.1" fill="none"/><path d="M2.8,9.6 H5.8 M3,3 H4.4" stroke="#000" stroke-width="0.8"/></g><g transform="translate(22.6,55)"><clipPath id="cliptop"><rect x="-2" y="7.6" width="20" height="10"/></clipPath><g clip-path="url(#cliptop)"><path d="M0.4,1.6 Q0.2,0.2 2,0.1 L6.4,-0.1 Q7.8,0 7.8,1.6 L7.9,6 Q6,7 4,6.6 Q2,7 0.5,6.2 Z" fill="#ffe868" stroke="#1c1c58" stroke-width="0.6"/><path d="M3.4,8.2 Q5,6.8 6.6,7.6 L9.8,7 L9.4,9.4 Q6,10.6 3.8,9.8 Z" fill="#ffe868" stroke="#1c1c58" stroke-width="0.6"/><path d="M1.7,1.4 Q0.9,3 1.8,4.6 L3.2,5" stroke="#e04a10" stroke-width="1.1" fill="none"/><path d="M4.6,0.8 L5.2,2.2 M4,3.8 Q5.4,4.6 6.8,3.6" stroke="#e84818" stroke-width="0.9" fill="none"/><path d="M0.4,7.8 Q2.4,6.2 5.4,6.6" stroke="#30a0e0" stroke-width="1.1" fill="none"/><path d="M1.4,8.8 L3,7.6 M5.8,8.6 L6.8,7.6" stroke="#1838a0" stroke-width="0.7" fill="none"/><path d="M9.6,-0.4 Q11.6,2 9.2,4.6" stroke="#3090d8" stroke-width="0.9" fill="none"/></g></g></svg><div style="position:absolute;left:34px;top:62.4px;width:60px;height:3px;overflow:hidden;"><span style="position:absolute;left:2px;top:-7.05px;font-size:8.5px;line-height:10.5px;color:#e2e2f4;font-weight:400;white-space:pre;transform:scaleX(0.6432);transform-origin:0 0;">Construction Elements</span></div><span style="position:absolute;left:46.6px;top:71.60px;font-size:8.0px;line-height:10.0px;color:#e2e2f4;font-weight:400;white-space:pre;transform:scaleX(0.8994);transform-origin:0 0;">Tooling Axis</span><span style="position:absolute;left:46.6px;top:86.73px;font-size:8.0px;line-height:10.0px;color:#e2e2f4;font-weight:400;white-space:pre;transform:scaleX(0.8264);transform-origin:0 0;">Class B Surface</span><span style="position:absolute;left:57.3px;top:101.86px;font-size:8.0px;line-height:10.0px;color:#e2e2f4;font-weight:400;white-space:pre;transform:scaleX(0.8525);transform-origin:0 0;">Bezel Arm Rest Surface</span><span style="position:absolute;left:57.3px;top:116.99px;font-size:8.0px;line-height:10.0px;color:#e2e2f4;font-weight:400;white-space:pre;transform:scaleX(0.8720);transform-origin:0 0;">Walls</span><span style="position:absolute;left:57.3px;top:132.12px;font-size:8.0px;line-height:10.0px;color:#e2e2f4;font-weight:400;white-space:pre;transform:scaleX(0.8117);transform-origin:0 0;">Base</span><span style="position:absolute;left:57.3px;top:147.25px;font-size:8.0px;line-height:10.0px;color:#e2e2f4;font-weight:400;white-space:pre;transform:scaleX(0.8845);transform-origin:0 0;">Measure for Fillets</span><span style="position:absolute;left:57.3px;top:162.38px;font-size:8.0px;line-height:10.0px;color:#e2e2f4;font-weight:400;white-space:pre;transform:scaleX(0.8430);transform-origin:0 0;">B Surface Trim</span><span style="position:absolute;left:46.6px;top:177.51px;font-size:8.0px;line-height:10.0px;color:#e2e2f4;font-weight:400;white-space:pre;transform:scaleX(0.8236);transform-origin:0 0;">Class C Surface</span><span style="position:absolute;left:46.6px;top:192.64px;font-size:8.0px;line-height:10.0px;color:#e2e2f4;font-weight:400;white-space:pre;transform:scaleX(0.8655);transform-origin:0 0;">Final Trim</span><span style="position:absolute;left:35.6px;top:207.77px;font-size:8.0px;line-height:10.0px;color:#e2e2f4;font-weight:400;white-space:pre;transform:scaleX(0.8402);transform-origin:0 0;">Final Closed Surface</span><div style="position:absolute;left:46px;top:221.6px;width:64.4px;height:11px;background:#ff8c14;border-radius:1px;"></div><span style="position:absolute;left:47px;top:222.90px;font-size:8.0px;line-height:10.0px;color:#ffe8d8;font-weight:400;white-space:pre;transform:scaleX(0.8202);transform-origin:0 0;">Switch Bezel Surface</span><span style="position:absolute;left:35.6px;top:238.03px;font-size:8.0px;line-height:10.0px;color:#e2e2f4;font-weight:400;white-space:pre;transform:scaleX(0.8418);transform-origin:0 0;">Switch Bezel Solid</span><span style="position:absolute;left:37px;top:253.16px;font-size:8.0px;line-height:10.0px;color:#e2e2f4;font-weight:400;white-space:pre;transform:scaleX(0.8653);transform-origin:0 0;">Free Form Analysis.2</span><span style="position:absolute;left:46.5px;top:268.29px;font-size:8.0px;line-height:10.0px;color:#e2e2f4;font-weight:400;white-space:pre;transform:scaleX(0.8780);transform-origin:0 0;">Draft Analysis.2</span><span style="position:absolute;left:46.5px;top:283.42px;font-size:8.0px;line-height:10.0px;color:#e2e2f4;font-weight:400;white-space:pre;transform:scaleX(0.8852);transform-origin:0 0;">Draft Analysis.3</span><span style="position:absolute;left:21.4px;top:298.55px;font-size:8.0px;line-height:10.0px;color:#e2e2f4;font-weight:400;white-space:pre;transform:scaleX(0.8867);transform-origin:0 0;">Measure</span><div style="position:absolute;left:24px;top:312.38000000000005px;width:37.0px;height:11px;background:#ff8c14;border-radius:1px;"></div><span style="position:absolute;left:25px;top:313.68px;font-size:8.0px;line-height:10.0px;color:#ffe8d8;font-weight:400;white-space:pre;transform:scaleX(0.8840);transform-origin:0 0;">Publication</span><span style="position:absolute;left:35.6px;top:328.81px;font-size:8.0px;line-height:10.0px;color:#e2e2f4;font-weight:400;white-space:pre;transform:scaleX(0.8555);transform-origin:0 0;">TOOLING AXIS</span><span style="position:absolute;left:35.6px;top:343.94px;font-size:8.0px;line-height:10.0px;color:#e2e2f4;font-weight:400;white-space:pre;transform:scaleX(0.8094);transform-origin:0 0;">CLASS A</span><span style="position:absolute;left:35.6px;top:359.07px;font-size:8.0px;line-height:10.0px;color:#e2e2f4;font-weight:400;white-space:pre;transform:scaleX(0.7851);transform-origin:0 0;">B SURFACE</span><span style="position:absolute;left:35.6px;top:374.20px;font-size:8.0px;line-height:10.0px;color:#e2e2f4;font-weight:400;white-space:pre;transform:scaleX(0.8236);transform-origin:0 0;">Class C Surface</span>
<!-- toolbars -->
<svg style="position:absolute;left:0px;top:0px;pointer-events:none" width="800" height="450" viewBox="0 0 800 450"><path d="M7.4,24 V32.4" stroke="#f6f6fc" stroke-width="0.9"/><path d="M8.200000000000001,24 V32.4" stroke="#a8a8c0" stroke-width="0.5"/><g transform="translate(18.8,32.3) scale(1)"><circle r="5.5" fill="#141a68"/><path d="M-4.2,0.2 Q-4,-3.6 0,-4 Q3.4,-3.8 4,-1 Q2,-2.6 0,-2.2 Q-2,-1.6 -2.2,0.4 Q-3.2,1.2 -4.2,0.2 Z" fill="#e8e880"/><path d="M4.2,-0.2 Q4,3.6 0,4 Q-3.4,3.8 -4,1 Q-2,2.6 0,2.2 Q2,1.6 2.2,-0.4 Q3.2,-1.2 4.2,-0.2 Z" fill="#e8e880"/><path d="M-3.8,1.6 Q-2,3.4 0.4,3" stroke="#48a0d8" stroke-width="0.8" fill="none"/><path d="M3.8,-1.6 Q2,-3.4 -0.4,-3" stroke="#48a0d8" stroke-width="0.7" fill="none"/></g><g transform="translate(33.6,32.3) scale(1)"><circle r="5.5" fill="#141a68"/><path d="M-4.2,0.2 Q-4,-3.6 0,-4 Q3.4,-3.8 4,-1 Q2,-2.6 0,-2.2 Q-2,-1.6 -2.2,0.4 Q-3.2,1.2 -4.2,0.2 Z" fill="#e8e880"/><path d="M4.2,-0.2 Q4,3.6 0,4 Q-3.4,3.8 -4,1 Q-2,2.6 0,2.2 Q2,1.6 2.2,-0.4 Q3.2,-1.2 4.2,-0.2 Z" fill="#e8e880"/><path d="M-3.8,1.6 Q-2,3.4 0.4,3" stroke="#48a0d8" stroke-width="0.8" fill="none"/><path d="M3.8,-1.6 Q2,-3.4 -0.4,-3" stroke="#48a0d8" stroke-width="0.7" fill="none"/><path d="M-0.2,5.8 L-1.4,2 L-0.2,1 L0.2,-2 L1.4,-2.2 L1.8,0 L4.6,0.8 L5.2,3.4 L4.2,5.8 Z" fill="#fafafa" stroke="#707078" stroke-width="0.5"/></g><g transform="translate(47.8,32.3) scale(1)"><path d="M-0.6,-4.6 V0.8 L-4.2,4.2 M-0.6,0.8 L4.6,1.4" stroke="#a08a60" stroke-width="0.9" fill="none"/><circle cx="-0.6" cy="-4.8" r="0.9" fill="#202068"/><circle cx="-4.4" cy="4.4" r="0.9" fill="#303070"/><circle cx="4.8" cy="1.4" r="0.9" fill="#202068"/></g><g transform="translate(62.7,32.3) scale(1)"><rect x="-5.8" y="-5.8" width="11.6" height="11.6" fill="#dadaee"/><path d="M-4.4,0 H-1 M-1,-3.6 V3.6 M-1,-3.6 H3.4 M-1,0 H3.4 M-1,3.6 H3.4 M-1,-1.8 H1 M-1,1.8 H1" stroke="#3058e0" stroke-width="0.6" fill="none"/><rect x="-5.8999999999999995" y="-0.9" width="2.6" height="1.8" fill="#58a8f8" stroke="#2848d8" stroke-width="0.5"/><rect x="2.3" y="-4.5" width="2.6" height="1.8" fill="#58a8f8" stroke="#2848d8" stroke-width="0.5"/><rect x="2.3" y="-0.9" width="2.6" height="1.8" fill="#58a8f8" stroke="#2848d8" stroke-width="0.5"/><rect x="2.3" y="2.7" width="2.6" height="1.8" fill="#58a8f8" stroke="#2848d8" stroke-width="0.5"/><rect x="-0.7000000000000001" y="-2.7" width="2.6" height="1.8" fill="#58a8f8" stroke="#2848d8" stroke-width="0.5"/><rect x="-0.7000000000000001" y="0.9" width="2.6" height="1.8" fill="#58a8f8" stroke="#2848d8" stroke-width="0.5"/><rect x="-1.9" y="-4.7" width="2.6" height="1.8" fill="#58a8f8" stroke="#2848d8" stroke-width="0.5"/></g><g transform="translate(77.4,32.3) scale(1)"><path d="M-4.4,-5 V5 M-5,-4.4 H5" stroke="#4878f0" stroke-width="0.8" stroke-dasharray="1.6 0.5"/><path d="M-1.5,-5 V5 M-5,-1.5 H5" stroke="#4878f0" stroke-width="0.8" stroke-dasharray="1.6 0.5"/><path d="M1.5,-5 V5 M-5,1.5 H5" stroke="#4878f0" stroke-width="0.8" stroke-dasharray="1.6 0.5"/><path d="M4.4,-5 V5 M-5,4.4 H5" stroke="#4878f0" stroke-width="0.8" stroke-dasharray="1.6 0.5"/><circle cx="-4.4" cy="-4.4" r="0.7" fill="#40a0e8"/><circle cx="-4.4" cy="-1.5" r="0.7" fill="#40a0e8"/><circle cx="-4.4" cy="1.5" r="0.7" fill="#40a0e8"/><circle cx="-4.4" cy="4.4" r="0.7" fill="#40a0e8"/><circle cx="-1.5" cy="-4.4" r="0.7" fill="#40a0e8"/><circle cx="-1.5" cy="-1.5" r="0.7" fill="#40a0e8"/><circle cx="-1.5" cy="1.5" r="0.7" fill="#40a0e8"/><circle cx="-1.5" cy="4.4" r="0.7" fill="#40a0e8"/><circle cx="1.5" cy="-4.4" r="0.7" fill="#40a0e8"/><circle cx="1.5" cy="-1.5" r="0.7" fill="#40a0e8"/><circle cx="1.5" cy="1.5" r="0.7" fill="#40a0e8"/><circle cx="1.5" cy="4.4" r="0.7" fill="#40a0e8"/><circle cx="4.4" cy="-4.4" r="0.7" fill="#40a0e8"/><circle cx="4.4" cy="-1.5" r="0.7" fill="#40a0e8"/><circle cx="4.4" cy="1.5" r="0.7" fill="#40a0e8"/><circle cx="4.4" cy="4.4" r="0.7" fill="#40a0e8"/></g><path d="M81.8,37.1 h4 l-2,2.5 z" fill="#000"/><g transform="translate(92.8,32.3) scale(1)"><path d="M-4.2,-3.6 Q-4.2,-5.4 0,-5.4 Q4.2,-5.4 4.2,-3.6 V3.8 Q4.2,5.6 0,5.6 Q-4.2,5.6 -4.2,3.8 Z" fill="#18b0bc" stroke="#1c4c58" stroke-width="0.7"/><rect x="-2.4" y="-3" width="4.6" height="7" fill="#58f0f4"/><path d="M-4.2,-3.4 Q0,-1.6 4.2,-3.4" stroke="#0c6470" stroke-width="0.7" fill="none"/><path d="M-5.8,1.4 Q0,2.4 5.8,0.4" stroke="#50d8d0" stroke-width="0.8" fill="none"/></g><path d="M97.2,37.1 h4 l-2,2.5 z" fill="#000"/><g transform="translate(108.6,32.3) scale(1)"><path d="M-4.6,-2.4 L-1.4,-4.8 L4.6,-4.8 L4.6,2.2 L1.6,4.8 L-4.6,4.8 Z" fill="#18b0c0"/><path d="M-4.6,-2.4 L-1.4,-4.8 L4.6,-4.8 L1.6,-2.4 Z" fill="#086878"/><path d="M1.6,-2.4 L4.6,-4.8 L4.6,2.2 L1.6,4.8 Z" fill="#0a4858"/><rect x="-3.4" y="-1.2" width="3.8" height="4.8" fill="#50f0f0"/></g><g transform="translate(122.7,32.3) scale(1)"><path d="M-4.4,-3.6 H-1 M-2.6,-3.6 V2.6 H4" stroke="#2040e0" stroke-width="1" fill="none"/><rect x="-5.2" y="-4.6" width="3.2" height="2" fill="#60b0ff"/><rect x="2.6" y="1.6" width="3" height="2" fill="#60b0ff"/><path d="M1.6,-3.6 L-1.6,0.2 L1,0.2 L-2.4,4.6 L-1.2,1.6 L-3.6,1.6 L-0.8,-3.6 Z" fill="#e81020"/></g><g transform="translate(137.7,32.3) scale(1)"><path d="M-5,1.4 Q-3,-3.6 2.2,-4.4 Q5.2,-4.4 4.8,-2.6 Q1.4,-2.6 -1,0.6 Z" fill="#ececf2" stroke="#b0b0b8" stroke-width="0.6"/><path d="M-4.6,2.8 Q-1,0.8 4.6,1.4" stroke="#b4b4bc" stroke-width="0.7" fill="none"/><rect x="-4.8" y="3.4" width="9.4" height="1.6" rx="0.8" fill="#f4f4f8" stroke="#b0b0b8" stroke-width="0.5"/></g><g transform="translate(152.3,32.3) scale(1)"><path d="M-3.6,-4.6 V4.6 M-3.6,-4 H-0.6 M-3.6,0 H4 M-3.6,4 H-0.6" stroke="#2040e0" stroke-width="1" fill="none"/><rect x="-5.2" y="-5.2" width="3.2" height="1.8" fill="#60b0ff"/><rect x="-5.2" y="3.4" width="3.2" height="1.8" fill="#60b0ff"/><rect x="1.4" y="-1" width="3.8" height="2" fill="#60b0ff" stroke="#2040e0" stroke-width="0.4"/><path d="M-4.4,0 L-1.6,-1.8 V1.8 Z" fill="#000"/></g><g transform="translate(167,32.3) scale(1)"><path d="M-3.2,3.4 Q-3.4,-1.2 0.4,-2.4 Q3.6,-2.6 4.8,0.8 L3.6,4.2 Q2.2,1.2 0,2 Z" fill="#f8f020" stroke="#807000" stroke-width="0.4"/><path d="M-4.8,-1 Q-3.4,-5 1.4,-4.8" stroke="#3060e0" stroke-width="0.9" fill="none"/><path d="M-5.2,2 L-3,2.2" stroke="#3060e0" stroke-width="0.8"/></g><path d="M171.2,37.1 h4 l-2,2.5 z" fill="#000"/><g transform="translate(182.5,32.3) scale(1)"><rect x="-2.7" y="-5.0" width="5.4" height="2.4" rx="1" fill="#38b8e8" stroke="#2040d0" stroke-width="0.6"/><rect x="-2.7" y="-1.4" width="5.4" height="2.4" rx="1" fill="#38b8e8" stroke="#2040d0" stroke-width="0.6"/><rect x="-2.7" y="2.2" width="5.4" height="2.4" rx="1" fill="#38b8e8" stroke="#2040d0" stroke-width="0.6"/></g><g transform="translate(197,32.3) scale(1)"><path d="M-5,0.6 L0.6,-4.6 L5.2,-2.2 L-0.4,3.2 Z" fill="#dff4ff" stroke="#2858e0" stroke-width="1"/><path d="M-5,0.6 V2.6 L-0.4,5 L5.2,-0.2 V-2.2" stroke="#2858e0" stroke-width="0.9" fill="none"/></g><path d="M201.6,37.1 h4 l-2,2.5 z" fill="#000"/><g transform="translate(307.5,32.3) scale(1)"><path d="M-5,1.2 L-1,-1.6 L5,-0.2 L5,2.4 L0.6,5 L-5,3.6 Z" fill="#7a08e0" stroke="#2c0868" stroke-width="0.5"/><path d="M-5,1.2 L-1,-1.6 L5,-0.2 L0.6,2.4 Z" fill="#b070f8"/><path d="M-2.6,1 L-0.6,-0.4 L2.4,0.4 L0.4,1.6 Z" fill="#7a08e0"/><path d="M-0.6,0.8 L2.6,-3.4" stroke="#b0a020" stroke-width="1.1"/><path d="M1.4,-4.8 L4.6,-4.8 L4,-2 Z" fill="#e8e040" stroke="#807010" stroke-width="0.3"/></g><g transform="translate(322,32.3) scale(1)"><path d="M-1.6,-4.6 L3.6,-3.6 L5,-0.4 L3,1.4 L5,3 L2,5 L-2.6,4 Z" fill="#7a08e0" stroke="#2c0868" stroke-width="0.5"/><path d="M0.6,-3 L3.4,-2.4 L3.8,-0.6 L1.6,0 Z" fill="#b070f8"/><circle cx="-2.6" cy="-0.8" r="2.3" fill="#f0f0f4" stroke="#808088" stroke-width="0.5"/><path d="M-4.6,2 L-1.6,1.4 L-0.4,3.6 L-3,4.2 Z" fill="#e8e040" stroke="#706010" stroke-width="0.4"/></g><g transform="translate(337,32.3) scale(1)"><path d="M-5,3.4 L-0.4,-4.6 L2.4,-4.4 L5.2,-0.6 L5.2,2.2 L1,5 Z" fill="#7a08e0" stroke="#2c0868" stroke-width="0.5" stroke-linejoin="round"/><path d="M-5,3.4 L-0.4,-4.6 L1.8,0.4 L1,5 Z" fill="#b070f8"/><path d="M-2.6,2.6 L-0.4,-1.8 L0.8,3 Z" fill="#7a08e0"/></g><g transform="translate(351.5,32.3) scale(1)"><path d="M-5.2,3.4 L1,-3.8 L5.2,-1.4 L5.2,1.8 L0.6,5 Z" fill="#7a08e0" stroke="#2c0868" stroke-width="0.5" stroke-linejoin="round"/><path d="M-5.2,3.4 L1,-3.8 L5.2,-1.4 L0.6,3.4 Z" fill="#b070f8"/><path d="M-1.4,1.6 L1.4,-1.6 L3.4,-0.6 L0.8,2.2 Z" fill="#7a08e0"/></g><g transform="translate(366,32.3) scale(1)"><path d="M-5,-1 V3 L1,5.2 L5.2,2.6 V-1.6 Z" fill="#7a08e0" stroke="#2c0868" stroke-width="0.5"/><path d="M-5,-3.6 Q-2,-2.4 0.6,-3.6 Q3.4,-4.8 5.2,-3.8 V-0.4 L1,1.8 L-5,-0.2 Z" fill="#30e0e8" stroke="#2c0868" stroke-width="0.4"/><path d="M-5,1.6 L1,3.6 L5.2,1.2" stroke="#4a0a98" stroke-width="0.6" fill="none"/></g><g transform="translate(380.6,32.3) scale(1)"><path d="M-5.2,1.6 L0.8,-4.2 Q4,-4.6 5.4,-1.8 L-0.6,4.6 Q-4.4,4.8 -5.2,1.6 Z" fill="#30e0e8" stroke="#2c0868" stroke-width="0.5"/><ellipse cx="-2.8" cy="3" rx="2.5" ry="1.9" transform="rotate(-25 -2.8 3)" fill="#7a08e0" stroke="#2c0868" stroke-width="0.4"/></g><g transform="translate(399.3,32.3) scale(1)"><path d="M-4.4,-2.6 L-1,-4.8 L4.4,-3.8 V2.8 L1,5 L-4.4,4 Z" fill="#7a08e0" stroke="#2c0868" stroke-width="0.5"/><path d="M1,-1.6 L4.4,-3.8 V2.8 L1,5 Z" fill="#10b0c8"/><path d="M-4.4,-2.6 L-1,-4.8 L4.4,-3.8 L1,-1.6 Z" fill="#30e0e8"/></g><path d="M404.3,37.1 h4 l-2,2.5 z" fill="#000"/><g transform="translate(415.5,32.3) scale(1)"><path d="M-5,2 L-1.6,-4.6 L5,-3.6 L1.8,3.4 L-2,4.8 Z" fill="#7a08e0" stroke="#2c0868" stroke-width="0.5"/><path d="M-2,2.6 L1,-3.6 L4.2,-3 L1.2,3.2 Z" fill="#30e0e8"/><path d="M-0.4,1.8 L1.8,-2.4 L3,-2.2 L0.8,2 Z" fill="#181868"/></g><g transform="translate(429.5,32.3) scale(1)"><path d="M-5,-3.4 L-2,-5 L5,-4.6 V3.8 L2,5.2 L-5,4.6 Z" fill="#7a08e0" stroke="#2c0868" stroke-width="0.5"/><rect x="-1.2" y="-3.6" width="3.6" height="8" fill="#30e0e8"/><path d="M2.6,-3.6 L5,-4.6 V3.8 L2.6,4.4 Z" fill="#4a0a98"/></g><g transform="translate(444.3,32.3) scale(1)"><rect x="-5.6" y="-5.6" width="11.2" height="11.2" fill="#c4c4d6"/><path d="M-4.6,-3 L-1.6,-4.8 L4.6,-4.4 V3.4 L1.6,5 L-4.6,4.4 Z" fill="#9048d8" stroke="#803040" stroke-width="0.5"/><rect x="-4" y="-2.6" width="3.6" height="6.4" fill="#28c8d0"/><path d="M0.4,-3.8 L4.2,-4 V3.2 L0.4,4.2 Z" fill="#8850d8"/><path d="M-1,0.4 H3.6" stroke="#e0e0f8" stroke-width="0.8" stroke-dasharray="1.2 0.6"/><circle cx="2.6" cy="0.4" r="1.2" fill="none" stroke="#d8d8f0" stroke-width="0.5"/></g><g transform="translate(463,32.3) scale(1)"><circle cx="-2" cy="-1.6" r="2.8" fill="#7a08e0"/><circle cx="2.4" cy="-2.4" r="2.6" fill="#7a08e0"/><circle cx="2.8" cy="2" r="2.8" fill="#7a08e0"/><circle cx="-2.4" cy="2.4" r="2.6" fill="#7a08e0"/><circle cx="0" cy="0" r="2.4" fill="#6808c8"/><path d="M-3.6,-2.2 Q-1.6,-4 0,-2.6 M1,-3.6 Q2.6,-4.6 4,-3.2 M-4,2 Q-2.6,0.6 -1,1.8" stroke="#b070f8" stroke-width="0.8" fill="none"/><path d="M-0.6,0.6 Q1,2 3,0.6" stroke="#4a0a98" stroke-width="0.7" fill="none"/></g><path d="M467.6,37.1 h4 l-2,2.5 z" fill="#000"/><g transform="translate(493.4,32.3) scale(1)"><path d="M-5.2,1.6 L0,-1 L5.2,1.4 L0.6,5 Z" fill="#30e0e8"/><path d="M-3.4,1.6 L0,-0.2 L3.2,1.4 L0.4,3.4 Z" fill="#f4e850"/><path d="M-5.2,1.6 L0.6,5 L5.2,1.4" stroke="#2070d0" stroke-width="0.7" fill="none"/><path d="M0,1.2 L2.6,-3.4" stroke="#c89020" stroke-width="1.1"/><path d="M1.2,-4.8 L4.6,-5 L4,-1.8 Z" fill="#f08820"/></g><path d="M497.8,37.1 h4 l-2,2.5 z" fill="#000"/><g transform="translate(509,32.3) scale(1)"><path d="M-5,0.2 Q-3.4,-5 1,-4.8 Q4.4,-4.2 5.2,-0.6 L3,-0.2 Q2,-2.8 0.4,-2.8 Q-2,-2.6 -2.8,0.6 Z" fill="#60a8ff" stroke="#2040d0" stroke-width="0.5"/><path d="M-0.4,-2 V2.6" stroke="#f08820" stroke-width="1.4"/><path d="M-2,0.4 L-0.4,-2.6 L1.4,0.4 Z" fill="#f08820"/><path d="M-4.4,3.6 Q-0.4,1 4.4,3.4 L3,5.2 Q-0.4,3.6 -3,5.2 Z" fill="#18a8b0"/></g><path d="M513.6,37.1 h4 l-2,2.5 z" fill="#000"/><g transform="translate(525,32.3) scale(1)"><path d="M-3.2,-2.4 L3,-4.6 L5,0.6 L-0.6,4.8 Z" fill="#18b8c0"/><path d="M-3.2,-2.4 L3,-4.6 L3.6,-2.6 L-2.4,-0.4 Z" fill="#30e0e8"/><path d="M-3.2,-2.4 L-0.6,4.8 L5,0.6" stroke="#1050b0" stroke-width="0.7" fill="none"/><path d="M-5,-4.6 L-2.6,-2.6 M-5,-4.6 l1.8,0 M-5,-4.6 l0,1.8" stroke="#202020" stroke-width="0.7" fill="none"/></g><path d="M529.3,37.1 h4 l-2,2.5 z" fill="#000"/><g transform="translate(540.5,32.3) scale(1)"><path d="M-5.2,3.8 Q-5.4,-5 0,-5 Q5.4,-5 5.2,3.8 Q0,1.4 -5.2,3.8 Z" fill="#38a0f0" stroke="#1848c0" stroke-width="0.5"/><path d="M-3.2,1.4 L0,-3.8 L3.2,1.4 Q0,0.2 -3.2,1.4 Z" fill="#f4e850" stroke="#f08820" stroke-width="0.5"/><path d="M-4.6,4.8 Q0,2.6 4.6,4.8 L4.2,3 Q0,1 -4.2,3 Z" fill="#30e0e8"/></g><g transform="translate(555.4,32.3) scale(1)"><path d="M-4.4,4.6 Q-4.6,-4.4 0,-4.4 Q4.6,-4.4 4.4,4.6" stroke="#d8d048" stroke-width="1.2" fill="none"/><path d="M-4.4,4.6 Q-4.6,-4.4 0,-4.4 Q4.6,-4.4 4.4,4.6" stroke="#607020" stroke-width="0.4" fill="none"/><path d="M-3.4,0 Q0,-3.4 3.4,0 L3,1.8 Q0,-1 -3,1.8 Z" fill="#30e0e8" stroke="#1088a0" stroke-width="0.4"/><path d="M-3.2,3 Q0,0.4 3.2,3 L2.8,4.6 Q0,2.6 -2.8,4.6 Z" fill="#30e0e8" stroke="#1088a0" stroke-width="0.4"/></g><g transform="translate(569.3,32.3) scale(1)"><path d="M-4.6,-3.2 Q-1,-5 1,-3.6 Q3.2,-2.4 4.6,-3.6 V-1.6 Q3.2,-0.4 1,-1.6 Q-1,-3 -4.6,-1.2 Z" fill="#30e0e8" stroke="#1070c0" stroke-width="0.4"/><path d="M-4.6,-1 Q-1,-2.8 1,-1.4 Q3.2,-0.2 4.6,-1.4 V0.8 Q3.2,2 1,0.8 Q-1,-0.6 -4.6,1.2 Z" fill="#f4e850"/><path d="M-4.6,1.4 Q-1,-0.4 1,1 Q3.2,2.2 4.6,1 V3.2 Q3.2,4.4 1,3.2 Q-1,1.8 -4.6,3.6 Z" fill="#2880e8" stroke="#1040a0" stroke-width="0.4"/></g><g transform="translate(593.7,32.3) scale(1)"><rect x="-5.2" y="-5.2" width="10.4" height="10.4" rx="0.8" fill="#1c3c98"/><rect x="-4.2" y="-4.2" width="3.6" height="3.6" rx="0.9" fill="#2c80f0"/><rect x="0.6" y="-4.2" width="3.6" height="3.6" rx="0.9" fill="#30c8f0"/><rect x="-4.2" y="0.6" width="3.6" height="3.6" rx="0.9" fill="#38d8f0"/><rect x="0.6" y="0.6" width="3.6" height="3.6" rx="0.9" fill="#2c80f0"/></g><path d="M598.1,37.1 h4 l-2,2.5 z" fill="#000"/><g transform="translate(609.5,32.3) scale(1)"><path d="M-4.8,-1 L0.4,1.4 L5,-2 L4.6,2.2 L0.4,5 L-3.8,2.6 Z" fill="#2870e8"/><path d="M-1.6,0.6 L0.4,1.4 L5,-2 L4.6,0.4 L0.4,3.2 Z" fill="#30e0e8"/><path d="M-4.8,-4.6 L1.4,-1.2 M-4.8,-2 L1.6,-3.6" stroke="#303030" stroke-width="0.7" fill="none"/><circle cx="3" cy="-4" r="1.2" fill="#f0e8a0" stroke="#705010" stroke-width="0.5"/><path d="M-4,-4.8 L3,-4.6" stroke="#f8f8f8" stroke-width="1"/></g><path d="M613.8,37.1 h4 l-2,2.5 z" fill="#000"/><g transform="translate(625.4,32.3) scale(1)"><path d="M-5.2,3.6 Q-4.8,-2.6 0,-2.8 Q4.8,-2.6 5.2,3.6 L3.6,3.8 Q2.6,1.4 0,1.4 Q-2.6,1.4 -3.6,3.8 Z" fill="#30e0e8" stroke="#1868c8" stroke-width="0.5"/><path d="M-4.2,3.8 Q-3.4,0.8 0,0.8 Q3.4,0.8 4.2,3.8" stroke="#f4e850" stroke-width="1.1" fill="none"/></g><path d="M629.6,37.1 h4 l-2,2.5 z" fill="#000"/><g transform="translate(641,32.3) scale(1)"><path d="M-4.8,-4.2 Q2.4,-5 4.2,0.6 L4.8,4.6 L1.4,5 Q1.4,0 -3.4,-1.4 Z" fill="#ffe8a0" stroke="#e04858" stroke-width="0.6"/><path d="M-4.8,-4.2 L-3.4,-1.4 L-1.2,-2.2 L-2.2,-4.8 Z" fill="#18a0a8"/><path d="M1.4,5 L4.8,4.6 L4.4,2.6 L1.4,3 Z" fill="#18a0a8"/></g><path d="M645.1,37.1 h4 l-2,2.5 z" fill="#000"/><g transform="translate(656.3,32.3) scale(1)"><path d="M-5,-2.6 L-2,-4.6 V2.6 L-5,4.6 Z" fill="#30e0e8" stroke="#1890b0" stroke-width="0.4"/><path d="M1.4,-2.2 L5,-4.8 V2.2 L1.4,4.8 Z" fill="#30e0e8" stroke="#1890b0" stroke-width="0.4"/><path d="M-1.4,-3.6 V3.8 M0.2,-2.6 V4.6" stroke="#404870" stroke-width="0.8"/></g><path d="M660.9,37.1 h4 l-2,2.5 z" fill="#000"/><g transform="translate(672.2,32.3) scale(1)"><path d="M-5,1.4 L-0.6,-2.8 L4,0 L0.2,4.8 Z" fill="#2870e8"/><path d="M-3.6,1 L-0.4,-1.8 L2.6,0 L0,3 Z" fill="#30e0e8"/><path d="M0.4,-3.6 L3.4,-5.2 L5.2,-2.4 L2.6,-0.6 Z" fill="#f4e850" stroke="#807010" stroke-width="0.4"/><circle cx="4.6" cy="-4.6" r="0.9" fill="#202020"/></g><path d="M676.8,37.1 h4 l-2,2.5 z" fill="#000"/><g transform="translate(698.6,32.3) scale(1)"><path d="M-5.4,4 Q-4.8,-1.6 0,-1.8 Q4.8,-1.6 5.4,4 Q0,1.8 -5.4,4 Z" fill="#30e0e8" stroke="#1070c0" stroke-width="0.6"/><path d="M-2,2 L0,-1.6 L2,2 Z" fill="#f4e850" stroke="#2040c0" stroke-width="0.6"/><circle cx="0" cy="-4.4" r="0.8" fill="#101010"/><path d="M0,-3.6 V-2" stroke="#404040" stroke-width="0.4"/></g><g transform="translate(713.5,32.3) scale(1)"><path d="M-3.6,-2.6 L2.6,-5 L5.4,-2 L5.2,1.6 L-0.4,5 L-3.8,1.6 Z" fill="#30e0e8" stroke="#1088a8" stroke-width="0.4"/><path d="M-3.4,-1.6 L3.4,-3.6 L5,-0.6 L-1.2,2.4 Z" fill="#f0e878" stroke="#807830" stroke-width="0.4"/><path d="M-5.4,-3.6 L-0.6,-0.2 M-4.8,2.6 L-2.6,4.6" stroke="#202020" stroke-width="0.9"/></g><g transform="translate(727.8,32.3) scale(1)"><rect x="-5.6" y="-5.6" width="11.2" height="11.2" fill="#c8c8da"/><path d="M-3.6,-2.6 L2.6,-5 L5.4,-2 L5.2,1.6 L-0.4,5 L-3.8,1.6 Z" fill="#30e0e8" stroke="#1088a8" stroke-width="0.4"/><path d="M-3.4,-1.6 L3.4,-3.6 L5,-0.6 L-1.2,2.4 Z" fill="#f0e878" stroke="#807830" stroke-width="0.4"/><path d="M-4.6,-3 V5" stroke="#f08820" stroke-width="1.2"/><path d="M-3.8,-3.4 L1,-5" stroke="#606060" stroke-width="0.6"/></g><g transform="translate(742.2,32.3) scale(1)"><path d="M-5.2,-3 L0,-4.8 L1.6,-1.6 L-3.6,0.4 Z" fill="#30e0e8" stroke="#1088b0" stroke-width="0.5"/><path d="M-3,0.6 L3.6,-2.2 L5.4,1 L-0.6,4.2 Z" fill="#30e0e8" stroke="#1088b0" stroke-width="0.5"/><circle cx="2.2" cy="-4.4" r="0.8" fill="#202020"/><path d="M2.6,3.4 l1.4,1.8" stroke="#202020" stroke-width="0.8"/></g><path d="M296.8,24 V32.4" stroke="#f6f6fc" stroke-width="0.9"/><path d="M297.6,24 V32.4" stroke="#a8a8c0" stroke-width="0.5"/><path d="M482,24 V32.4" stroke="#f6f6fc" stroke-width="0.9"/><path d="M482.8,24 V32.4" stroke="#a8a8c0" stroke-width="0.5"/><path d="M582.7,24 V32.4" stroke="#f6f6fc" stroke-width="0.9"/><path d="M583.5,24 V32.4" stroke="#a8a8c0" stroke-width="0.5"/><path d="M686.9,24 V32.4" stroke="#f6f6fc" stroke-width="0.9"/><path d="M687.6999999999999,24 V32.4" stroke="#a8a8c0" stroke-width="0.5"/><path d="M389.8,24.5 V41.5" stroke="#f4f4fa" stroke-width="0.8"/><path d="M389.1,24.5 V41.5" stroke="#b4b4cc" stroke-width="0.5"/><path d="M453,24.5 V41.5" stroke="#f4f4fa" stroke-width="0.8"/><path d="M452.3,24.5 V41.5" stroke="#b4b4cc" stroke-width="0.5"/><path d="M16.8,45.4 V51.8" stroke="#f6f6fc" stroke-width="0.9"/><path d="M17.6,45.4 V51.8" stroke="#a8a8c0" stroke-width="0.5"/><path d="M483.4,45.4 V52.4" stroke="#f6f6fc" stroke-width="0.9"/><path d="M484.2,45.4 V52.4" stroke="#a8a8c0" stroke-width="0.5"/><g transform="translate(495.3,53) scale(1)"><circle r="1.3" fill="#1838a0"/><circle r="0.5" cx="-0.2" cy="-0.2" fill="#6090ff"/></g><path d="M500,57.7 h4 l-2,2.5 z" fill="#000"/><g transform="translate(511,52.7) scale(1)"><path d="M-4.8,4.4 L4.8,-4.4" stroke="#2038a8" stroke-width="1"/></g><path d="M515.5,57.7 h4 l-2,2.5 z" fill="#000"/><g transform="translate(526.8,53.6) scale(1)"><path d="M-5.4,2 L-1.6,-2 L5.4,-2 L1.6,2 Z" fill="#f4f0a0" stroke="#3050c0" stroke-width="0.7"/></g><path d="M531.5,57.7 h4 l-2,2.5 z" fill="#000"/><path d="M536.6,45 V61" stroke="#f4f4fa" stroke-width="0.8"/><path d="M535.9,45 V61" stroke="#b4b4cc" stroke-width="0.5"/><g transform="translate(547,52.7) scale(1)"><path d="M-3.6,-2.6 Q-0.6,-2.2 0.6,-3.8 Q1.6,-5.2 3.4,-4.8" stroke="#209090" stroke-width="0.7" fill="none"/><path d="M-4.8,1.4 Q0,-2.4 4.8,1.4 L4.4,3 Q0,-0.6 -4.4,3 Z" fill="#30e0e8" stroke="#1868c8" stroke-width="0.5"/><path d="M-4.4,3.6 Q0,0.4 4.4,3.6" stroke="#f4e850" stroke-width="1.2" fill="none"/><path d="M-4.2,5 Q0,2.2 4.2,5" stroke="#1868c8" stroke-width="0.8" fill="none"/></g><path d="M551.2,57.7 h4 l-2,2.5 z" fill="#000"/><g transform="translate(562,52.7) scale(1)"><path d="M-4.6,-1.6 L0,-4.8 L4.8,-2.4 L4.8,2.6 L1,5.2 L-3,1.6 Z" fill="#2060d8"/><path d="M-2.2,-1.4 L0.6,-3.2 L3.4,-1.6 L2.6,2.8 L0.6,3.8 Z" fill="#30e0e8"/><path d="M-1.4,-0.4 L1.6,2.8" stroke="#f4e850" stroke-width="0.9"/><path d="M-5.2,2.6 L-2.6,0.6 L-3,4.4 Z" fill="#1030a0"/></g><g transform="translate(577,52.7) scale(1)"><path d="M-5.4,1.4 L-0.4,-3.8 Q3.6,-4.6 5.4,-0.6 L0.8,4.6 Q-0.4,0.8 -5.4,1.4 Z" fill="#2870e8"/><path d="M-3,0.6 L0.2,-2.8 Q3,-3.2 4.2,-0.6 L1.2,2.8 Q0,0.4 -3,0.6 Z" fill="#30e0e8"/><path d="M-1.4,-1 Q1.4,-1.4 2.8,1.2" stroke="#f4e850" stroke-width="0.9" fill="none"/></g><path d="M581.3,57.7 h4 l-2,2.5 z" fill="#000"/><path d="M586.4,45 V61" stroke="#f4f4fa" stroke-width="0.8"/><path d="M585.6999999999999,45 V61" stroke="#b4b4cc" stroke-width="0.5"/><g transform="translate(596.1,52.5) scale(1)"><circle r="4.4" fill="#d6d8ee" stroke="#2878c8" stroke-width="0.9"/></g><path d="M600.8,57.7 h4 l-2,2.5 z" fill="#000"/><g transform="translate(612.4,52.7) scale(1)"><path d="M-4.8,4.4 Q-3.4,0.6 -0.4,0.4 Q3,0.6 2.6,3.2 Q2,4.8 0.4,4" stroke="#2858d8" stroke-width="0.9" fill="none"/><path d="M-2.6,-2 Q-0.6,-5 2.6,-4 Q5.2,-2.6 4.4,0.6" stroke="#2858d8" stroke-width="0.9" fill="none"/><circle cx="-4.8" cy="4.4" r="0.7" fill="#40c0e0"/><circle cx="4.4" cy="0.8" r="0.7" fill="#40c0e0"/></g><path d="M616.5,57.7 h4 l-2,2.5 z" fill="#000"/><g transform="translate(248.6,52.6) scale(1)"><path d="M-5.6,0 L-1,-1 L1.6,2.6 L0.6,5 L-5.6,5 Z" fill="#2888f0"/><path d="M-5.6,3 L0.8,3.4 L0.6,5 L-5.6,5 Z" fill="#1858c0"/><path d="M-2.4,-1.6 L0.8,-3.4 L3.6,0.6 L0.6,2.6 Z" fill="#f4e858" stroke="#303030" stroke-width="0.6"/><path d="M1.6,-2.6 L4.4,-5.4 L5.8,-4.2 L3.2,-1 Z" fill="#1828a0"/></g><g transform="translate(263,52.6) scale(1)"><circle cx="-1" cy="1.4" r="3.8" fill="#f4c820"/><path d="M-4.6,2.4 Q-1,5 2.6,2.4 Q1.6,5.4 -1,5.2 Q-3.6,5.2 -4.6,2.4 Z" fill="#e048c0"/><circle cx="-2" cy="0" r="1.3" fill="#fff4a8"/><path d="M2,-3 L5,0" stroke="#2040c0" stroke-width="1.2"/><path d="M2.4,-5 L5.2,-4.4" stroke="#f0a070" stroke-width="1"/></g><path d="M3.9,420.4 V428.6" stroke="#f6f6fc" stroke-width="0.9"/><path d="M4.7,420.4 V428.6" stroke="#a8a8c0" stroke-width="0.5"/><g transform="translate(15.5,429.2) scale(1)"><path d="M-4.4,-4.8 H1.8 L4.4,-2.2 V5 H-4.4 Z" fill="#fffccc" stroke="#b8b890" stroke-width="0.5"/><path d="M1.8,-4.8 V-2.2 H4.4" fill="#e8e4a0" stroke="#a8a880" stroke-width="0.4"/></g><g transform="translate(29.2,429.2) scale(1)"><path d="M-5,-2.6 H-1.6 L-0.6,-1.4 H3.6 V4.4 H-5 Z" fill="#d8a010"/><path d="M-5,4.4 L-3,0 H5.4 L3.6,4.4 Z" fill="#ffd840" stroke="#806000" stroke-width="0.4"/><path d="M2,-4.4 Q4,-5 4.8,-3" stroke="#404040" stroke-width="0.6" fill="none"/><path d="M5.2,-3.6 L4.8,-2.2 L3.8,-3.2 Z" fill="#404040"/></g><g transform="translate(44,429.2) scale(1)"><rect x="-4.8" y="-4.8" width="9.6" height="9.6" fill="#8c8c10" stroke="#303000" stroke-width="0.5"/><rect x="-2.8" y="-4.4" width="5.6" height="3.8" fill="#f0f0e8"/><rect x="-2.4" y="1.4" width="4.8" height="3.2" fill="#101010"/><rect x="0.4" y="2" width="1.4" height="2.2" fill="#d8d8d8"/></g><g transform="translate(58.7,429.2) scale(1)"><path d="M-2.4,-4.8 L3.6,-4.8 L2.4,-1 L-3.6,-1 Z" fill="#a8d0f8" stroke="#505050" stroke-width="0.4"/><path d="M-5,0.4 L-3.2,-1.6 H5 L5,2.8 L3.4,5 H-5 Z" fill="#c8c890" stroke="#505030" stroke-width="0.5"/><path d="M-5,0.4 H3.4 L5,-1.6 M3.4,0.4 V5" stroke="#606040" stroke-width="0.5" fill="none"/><rect x="-4" y="1.8" width="6" height="1" fill="#30a030"/></g><g transform="translate(73,429.2) scale(1)"><path d="M-3,-5 L1.4,2 M3,-5 L-1.4,2" stroke="#404858" stroke-width="1" fill="none"/><circle cx="-2.4" cy="3.4" r="1.8" fill="#2050e0"/><circle cx="2.4" cy="3.4" r="1.8" fill="#2050e0"/></g><g transform="translate(87.8,429.2) scale(1)"><path d="M-5,-5 H-0.6 L1,-3.4 V2.4 H-5 Z" fill="#fafaff" stroke="#606880" stroke-width="0.5"/><path d="M-1,-1.8 H3.6 L5.4,0 V5.4 H-1 Z" fill="#fafaff" stroke="#606880" stroke-width="0.5"/><path d="M0.4,1 H4 M0.4,2.6 H4 M0.4,4 H4 M1.4,0.4 V4.8 M3,0.4 V4.8" stroke="#3050d0" stroke-width="0.6"/><path d="M-3.6,-3 V0.6" stroke="#3050d0" stroke-width="0.7"/></g><g transform="translate(102,429.2) scale(1)"><rect x="-5" y="-3.6" width="8" height="7.6" rx="0.6" fill="#a09028" stroke="#504810" stroke-width="0.5"/><rect x="-3" y="-5" width="4" height="2" fill="#d8c850" stroke="#504810" stroke-width="0.4"/><path d="M-0.6,-0.6 H5.2 V5.2 H-0.6 Z" fill="#f8f8ff" stroke="#606880" stroke-width="0.5"/><path d="M0.6,3.8 L2.4,1.6 L4.4,3.8 Z" fill="#3060e0"/></g><g transform="translate(117.2,429.2) scale(1)"><path d="M-4.8,-0.4 L-2,-4.4 L-1.6,-2.6 Q3.6,-2.8 4,1.4 Q3.4,4 0.6,4.4 Q2.6,2.4 1.6,0.6 Q0.4,-0.6 -1.6,-0.4 L-1.6,1.6 Z" fill="#28b060" stroke="#107838" stroke-width="0.5"/></g><path d="M121.9,433.7 h4 l-2,2.5 z" fill="#000"/><g transform="translate(133,429.2) scale(1)"><path d="M4.6,-0.4 L1.8,-4.4 L1.4,-2.6 Q-3.6,-2.8 -4,1.4 Q-3.4,4 -0.6,4.4 Q-2.6,2.4 -1.6,0.6 Q-0.4,-0.6 1.6,-0.4 L1.6,1.6 Z" fill="#d0d0d8" stroke="#b8b8c4" stroke-width="0.4" transform="scale(1,1)"/></g><path d="M137.6,433.7 h4 l-2,2.5 z" fill="#000"/><g transform="translate(148,429.2) scale(1)"><path d="M-4.8,-4.8 L-4.4,3 L-2.6,1.4 L-1.2,4.6 L0,4 L-1.4,1 L0.8,0.8 Z" fill="#f0e040" stroke="#404020" stroke-width="0.5"/></g><g transform="translate(213.7,429.2) scale(1)"><rect x="-4.8" y="-4.6" width="9.6" height="9.2" fill="#70707c"/><rect x="-4.8" y="-4.6" width="9.6" height="2" fill="#1828c8"/><path d="M-1.6,-2.6 V4.6 M1.6,-2.6 V4.6 M-4.8,-0.2 H4.8 M-4.8,2.2 H4.8" stroke="#9090a0" stroke-width="0.4"/></g><path d="M218.3,433.7 h4 l-2,2.5 z" fill="#000"/><g transform="translate(229.5,429.2) scale(1)"><path d="M-3.6,0.6 L2.4,-3.6 M-3.6,0.6 L2.6,0.4 M-3.6,0.6 L2.4,4" stroke="#303030" stroke-width="0.6"/><circle cx="3.4" cy="-3.6" r="1.7" fill="#5080ff"/><circle cx="3.4" cy="0.4" r="1.7" fill="#5080ff"/><circle cx="3.4" cy="4" r="1.5" fill="#5080ff"/><circle cx="-3.8" cy="0.8" r="1.9" fill="#f0d840" stroke="#2060c0" stroke-width="0.6"/><circle cx="-0.6" cy="-2.6" r="0.6" fill="#e02020"/><circle cx="-0.4" cy="3" r="0.6" fill="#e02020"/></g><g transform="translate(244,429.2) scale(1)"><path d="M-2.6,-1 V-3 Q0,-6 2.6,-3 V-1" stroke="#585858" stroke-width="1.1" fill="none"/><rect x="-4" y="-1.2" width="8" height="6.2" rx="1" fill="#8a8a8a" stroke="#404040" stroke-width="0.5"/><rect x="-3" y="-0.4" width="2.6" height="4.4" fill="#c4c4c4"/><circle cx="1" cy="1.8" r="1" fill="#303030"/></g><path d="M248.3,433.7 h4 l-2,2.5 z" fill="#000"/><g transform="translate(259,429.2) scale(1)"><rect x="-4.8" y="-4.8" width="3.8" height="2.8" fill="#f0e060" stroke="#606030" stroke-width="0.4"/><rect x="-4.8" y="-1.4" width="3.8" height="2.8" fill="#20a0a8" stroke="#105058" stroke-width="0.4"/><rect x="-4.8" y="2" width="3.8" height="2.8" fill="#20a0a8" stroke="#105058" stroke-width="0.4"/><path d="M0.2,-4.8 Q2,-4.8 2,-2.6 Q2,-0.4 3.4,0 Q2,0.4 2,2.6 Q2,4.8 0.2,4.8" stroke="#707078" stroke-width="0.9" fill="none"/><rect x="3.8" y="-0.8" width="1.4" height="1.6" fill="#9090a0"/></g><g transform="translate(283.5,429.2) scale(1)"><path d="M-4.8,-4 L-1,-1.6 L2.4,-4.4 L3.8,-3.4 L1.4,-0.2 L5.2,1.4 L4.6,2.8 L0.4,2 L-2.4,5 L-3.6,4.4 L-2,0.8 L-5.2,-2.6 Z" fill="#38c8e8" stroke="#1060a0" stroke-width="0.6"/></g><g transform="translate(298.2,429.2) scale(1)"><rect x="-5" y="-5" width="10" height="10" fill="#f4f088" stroke="#38c8d8" stroke-width="0.8"/><path d="M-3.6,-3.6 L-1.8,-1.8 M3.6,-3.6 L1.8,-1.8 M-3.6,3.6 L-1.8,1.8 M3.6,3.6 L1.8,1.8" stroke="#101010" stroke-width="0.9"/><path d="M-2.6,-1 L-1,-1 L-1,-2.6 Z M2.6,-1 L1,-1 L1,-2.6 Z M-2.6,1 L-1,1 L-1,2.6 Z M2.6,1 L1,1 L1,2.6 Z" fill="#101010"/><circle r="0.6" fill="#404020"/></g><g transform="translate(313,429.2) scale(1)"><path d="M0,-5.4 L2,-3 H0.8 V-0.8 H3 V-2 L5.4,0 L3,2 V0.8 H0.8 V3 H2 L0,5.4 L-2,3 H-0.8 V0.8 H-3 V2 L-5.4,0 L-3,-2 V-0.8 H-0.8 V-3 H-2 Z" fill="#1828a0" stroke="#0a1060" stroke-width="0.3"/><circle r="0.9" fill="#90a8ff"/></g><g transform="translate(327.5,429.2) scale(1)"><path d="M-5.2,-1.6 L-1,-3.4 L3.8,-2.6 L5,-0.6 L1.6,0.6 L-2,0.2 L-5.2,0.8 Z" fill="#f4c8a8" stroke="#704030" stroke-width="0.5"/><circle cx="1.2" cy="2.2" r="3" fill="#3080e8" stroke="#1040a0" stroke-width="0.5"/><path d="M-1.4,1.6 Q1.2,0.4 4,1.6" stroke="#c0e0ff" stroke-width="0.7" fill="none"/><path d="M-5.2,-0.4 L-3,-0.6" stroke="#e02020" stroke-width="0.8"/></g><g transform="translate(342,429.2) scale(1)"><path d="M0.6,0.8 L4.8,5" stroke="#205080" stroke-width="1.7"/><circle cx="-1.4" cy="-1.4" r="3.4" fill="#f4f8ff" stroke="#1a3a70" stroke-width="1.1"/><path d="M-3.2,-1.4 H0.4" stroke="#101010" stroke-width="1"/><path d="M-1.4,-3.2 V0.4" stroke="#101010" stroke-width="1"/></g><g transform="translate(356.5,429.2) scale(1)"><path d="M0.6,0.8 L4.8,5" stroke="#205080" stroke-width="1.7"/><circle cx="-1.4" cy="-1.4" r="3.4" fill="#f4f8ff" stroke="#1a3a70" stroke-width="1.1"/><path d="M-3.2,-1.4 H0.4" stroke="#101010" stroke-width="1"/></g><g transform="translate(372,429.2) scale(1)"><path d="M-5.2,3.8 L-1.6,0.6 L5.2,1 L2,4.6 Z" fill="#20a8b8" stroke="#106070" stroke-width="0.5"/><path d="M0,2.4 V-3.6" stroke="#c8a870" stroke-width="0.9"/><path d="M-1.6,-2.8 L0,-5.4 L1.6,-2.8 Z" fill="#3050d0"/></g><g transform="translate(385.6,429.2) scale(1)"><rect x="-4.6" y="-4.8" width="9.2" height="9.6" fill="#2850d8"/><rect x="-3.8" y="-4" width="3.4" height="3.6" fill="#40e0f8"/><rect x="0.4" y="-4" width="3.4" height="3.6" fill="#8070e0"/><rect x="-3.8" y="0.4" width="3.4" height="3.6" fill="#40e0f8"/><rect x="0.4" y="0.4" width="3.4" height="3.6" fill="#40e0f8"/></g><g transform="translate(400.5,429.2) scale(1)"><path d="M-5.2,-2.6 L-2,-5 L5.2,-5 L5.2,2.2 L2,5 L-5.2,5 Z" fill="#38b8f8" stroke="#1868d0" stroke-width="0.6"/><rect x="-5.2" y="-2.6" width="7.2" height="7.6" fill="#50e0ff" stroke="#1868d0" stroke-width="0.6"/><path d="M2,-2.6 L5.2,-5" stroke="#1868d0" stroke-width="0.6"/></g><path d="M405,433.7 h4 l-2,2.5 z" fill="#000"/><g transform="translate(416.3,429.2) scale(1)"><rect x="-4" y="-5" width="8" height="10" rx="2.4" fill="#e8e8f4" stroke="#8080b0" stroke-width="0.8"/></g><path d="M420.8,433.7 h4 l-2,2.5 z" fill="#000"/><g transform="translate(432,429.2) scale(1)"><rect x="-5" y="-5" width="10" height="10" fill="#38d0e8" stroke="#7858b0" stroke-width="0.8"/><path d="M-3.4,-1.6 L0,-3.4 L3,-1.8 L1,1 L-2.6,0.8 Z" fill="#e8e078" stroke="#707040" stroke-width="0.4"/><path d="M-3.4,2.6 L0.6,0.4 L3.4,1.4 L0.4,3.8 Z" fill="#f0d060" stroke="#605020" stroke-width="0.4"/><path d="M-3.8,3.6 Q-1,1.6 1.4,3.2" stroke="#3050c0" stroke-width="0.7" fill="none"/></g><g transform="translate(446.2,429.2) scale(1)"><rect x="-5" y="-5" width="10" height="10" fill="#38d0e8" stroke="#7858b0" stroke-width="0.8"/><path d="M-3.4,2.6 L0.6,0.4 L3.4,1.4 L0.4,3.8 Z" fill="#f0d060" stroke="#605020" stroke-width="0.4"/><path d="M-3.8,3.6 Q-1,1.6 1.4,3.2" stroke="#3050c0" stroke-width="0.7" fill="none"/></g><g transform="translate(473.6,429.2) scale(1)"><path d="M-4.4,0.4 H4.4 Q5.4,0.4 5.4,1.6 V4 Q5.4,5.2 4.4,5.2 H-4.4 Q-5.4,5.2 -5.4,4 V1.6 Q-5.4,0.4 -4.4,0.4 Z" fill="#b0b0b8" stroke="#404040" stroke-width="0.6"/><rect x="-3.6" y="2" width="6" height="1.8" fill="#f4f4f4" stroke="#505050" stroke-width="0.4"/><circle cx="-3.6" cy="-3.4" r="1.7" fill="#18a8c8"/><path d="M-1.6,-4 Q2.4,-5.4 3.6,-2" stroke="#e8c020" stroke-width="1" fill="none"/><path d="M2,-2.4 L4.8,-2.6 L3.6,0 Z" fill="#2040d0"/></g><g transform="translate(498.7,429.2) scale(1)"><path d="M-4.8,-2.6 H4.8" stroke="#2040d0" stroke-width="0.9"/><path d="M-5.4,-2.6 L-2.8,-4.6 V-0.6 Z M5.4,-2.6 L2.8,-4.6 V-0.6 Z" fill="#2040d0"/><rect x="-5" y="1" width="10" height="3.6" fill="#f09088" stroke="#2080c0" stroke-width="0.6"/><path d="M-3,1 V3 M-1,1 V3 M1,1 V3 M3,1 V3" stroke="#a02020" stroke-width="0.6"/></g><g transform="translate(513.4,429.2) scale(1)"><path d="M-4.4,-4.6 H3.8 V3.6 H0.4 V5.2 H-2.6 V1.6 H-4.4 Z" fill="#282828"/><path d="M0.8,-4.2 H3.4 V3.2 H0.8 Z" fill="#909098"/><circle cx="-2.2" cy="-1.4" r="1.8" fill="#20b0b8"/><path d="M-4.6,0.4 L-2.8,-0.4" stroke="#3060e0" stroke-width="0.8"/></g><g transform="translate(527.9,429.2) scale(1)"><rect x="-1.2" y="-5.2" width="2.4" height="2.2" fill="#404020"/><path d="M-3,-2.8 H3 L3.2,4 Q0,5.8 -3.2,4 Z" fill="#c8a820" stroke="#605010" stroke-width="0.5"/><path d="M-1.8,-2 V3.6" stroke="#f0e080" stroke-width="1"/></g><g transform="translate(552.3,429.2) scale(1)"><path d="M-5.4,-2.4 H-3 L-2,-3.8 H2 L3,-2.4 H5.4 V3.8 H-5.4 Z" fill="#50505c" stroke="#202028" stroke-width="0.5"/><circle cx="0" cy="0.8" r="2.2" fill="#c0c8d8" stroke="#181820" stroke-width="0.7"/><rect x="-4.8" y="-1.8" width="1.6" height="1" fill="#e8e8a0"/><rect x="3" y="-1.8" width="1.8" height="1" fill="#e0e0e8"/></g><g transform="translate(576.3,429.2) scale(1)"><path d="M-5,-3.8 H2.6 V-1 H-2 V3.8 H-5 Z" fill="#38b0d0" stroke="#505060" stroke-width="0.5"/><rect x="-2" y="-1" width="5.4" height="5.6" fill="#d0d0dc" stroke="#606070" stroke-width="0.5"/><path d="M4.6,-3 V5 M-4.6,-5.2 V-3.8 M2.4,-5.2 V-3.8" stroke="#505060" stroke-width="0.8"/><path d="M3.6,-1 V4.6" stroke="#e8d870" stroke-width="0.8"/></g><g transform="translate(591,429.2) scale(1)"><rect x="-4.6" y="-3.6" width="7.4" height="8" fill="#58c8e8" stroke="#406080" stroke-width="0.7"/><path d="M-4.6,-5.2 V-3.6 M2.8,-5.2 V-3.6 M4.8,-2.6 V5" stroke="#505060" stroke-width="0.8"/><path d="M3.8,-2 V4.4" stroke="#e8d870" stroke-width="0.8"/></g><g transform="translate(616.5,429.2) scale(1)"><path d="M-4.8,3.8 L-0.4,0.8 H5" stroke="#303080" stroke-width="0.6" fill="none"/><path d="M-5.4,4.4 L-3.4,3.6 L-4.4,2.4 Z" fill="#101060"/></g><path d="M620.8,433.7 h4 l-2,2.5 z" fill="#000"/><g transform="translate(641.5,429.2) scale(1)"><path d="M-1.6,-3.6 L3.6,-5 L5,-2.4 V3.2 L0,5 Z" fill="#b0b0c0" stroke="#e03030" stroke-width="0.7"/><path d="M0.6,-1.6 L3.6,-2.8 V2.4 L0.6,3.4 Z" fill="#e8e8f0"/><circle cx="-3.4" cy="-1.4" r="1.5" fill="#3070f0"/><circle cx="-1" cy="1" r="1.5" fill="#3070f0"/><circle cx="-3" cy="3.6" r="1.5" fill="#3070f0"/><path d="M-3.4,-1.4 L-1,1 L-3,3.6" stroke="#1840c0" stroke-width="0.6" fill="none"/></g><path d="M646.1,433.7 h4 l-2,2.5 z" fill="#000"/><g transform="translate(667.8,429.2) scale(1)"><path d="M-5,1 L-0.6,-1.2 L5.2,0 L3.6,3.4 L-1.4,5.2 L-5,3.4 Z" fill="#f88018"/><path d="M-5,1 L-0.6,-1.2 L5.2,0 L0.4,1.6 Z" fill="#ffa040"/><path d="M0.4,0.6 V-4.6" stroke="#f0e0d0" stroke-width="0.7"/><circle cx="-3.6" cy="-2.6" r="0.9" fill="#f88018"/></g><path d="M672,433.7 h4 l-2,2.5 z" fill="#000"/><g transform="translate(692.8,429.2) scale(1)"><path d="M-5,-1.6 Q-2,-4.4 1,-3.6 L5.2,-4.8 V1.6 L0.6,5 Q-4.6,4.6 -5,-1.6 Z" fill="#f09030" stroke="#804010" stroke-width="0.5"/><circle cx="-1.2" cy="1" r="2.2" fill="#f8d890" stroke="#c06010" stroke-width="0.8"/><path d="M1,-3.6 L5.2,-4.8 V1.6 L2.6,3.4 Z" fill="#704028"/><path d="M2,-5.4 L-0.6,0.4" stroke="#202020" stroke-width="0.8"/></g><path d="M161.9,420.4 V428.6" stroke="#f6f6fc" stroke-width="0.9"/><path d="M162.70000000000002,420.4 V428.6" stroke="#a8a8c0" stroke-width="0.5"/><path d="M273,420.4 V428.6" stroke="#f6f6fc" stroke-width="0.9"/><path d="M273.8,420.4 V428.6" stroke="#a8a8c0" stroke-width="0.5"/><path d="M461.9,420.4 V428.6" stroke="#f6f6fc" stroke-width="0.9"/><path d="M462.7,420.4 V428.6" stroke="#a8a8c0" stroke-width="0.5"/><path d="M487.3,420.4 V428.6" stroke="#f6f6fc" stroke-width="0.9"/><path d="M488.1,420.4 V428.6" stroke="#a8a8c0" stroke-width="0.5"/><path d="M541.3,420.4 V428.6" stroke="#f6f6fc" stroke-width="0.9"/><path d="M542.0999999999999,420.4 V428.6" stroke="#a8a8c0" stroke-width="0.5"/><path d="M566,420.4 V428.6" stroke="#f6f6fc" stroke-width="0.9"/><path d="M566.8,420.4 V428.6" stroke="#a8a8c0" stroke-width="0.5"/><path d="M604.8,420.4 V428.6" stroke="#f6f6fc" stroke-width="0.9"/><path d="M605.5999999999999,420.4 V428.6" stroke="#a8a8c0" stroke-width="0.5"/><path d="M630.5,420.4 V428.6" stroke="#f6f6fc" stroke-width="0.9"/><path d="M631.3,420.4 V428.6" stroke="#a8a8c0" stroke-width="0.5"/><path d="M656,420.4 V428.6" stroke="#f6f6fc" stroke-width="0.9"/><path d="M656.8,420.4 V428.6" stroke="#a8a8c0" stroke-width="0.5"/><path d="M681.4,420.4 V428.6" stroke="#f6f6fc" stroke-width="0.9"/><path d="M682.1999999999999,420.4 V428.6" stroke="#a8a8c0" stroke-width="0.5"/><g transform="translate(200.4,429.2) scale(1)"><ellipse cx="0" cy="-2" rx="1.6" ry="2.2" fill="#dcdcec" stroke="#c4c4d4" stroke-width="0.5"/><ellipse cx="0" cy="2.4" rx="1.6" ry="2.2" fill="#dcdcec" stroke="#c4c4d4" stroke-width="0.5"/></g><g transform="translate(187.5,429.2) scale(1)"><path d="M-5,-1 Q-5,-4.8 0,-4.8 Q5.2,-4.8 5.2,-1 Q5.2,2.6 0,2.6 L-3.4,5.2 L-2.4,2.2 Q-5,1.4 -5,-1 Z" fill="#f4f4f4" stroke="#202020" stroke-width="0.8"/><path d="M-1.6,-1 Q0,-3.4 1.8,-1.6 Q2.2,0.4 0,0.6 Q-1.4,0 -0.4,-1.2" stroke="#404040" stroke-width="0.6" fill="none"/></g><path d="M783.2,64.5 H791.4" stroke="#f4f4fa" stroke-width="0.9"/><path d="M783.2,63.8 H791.4" stroke="#b8b8cc" stroke-width="0.4"/><path d="M783.2,88.9 H791.4" stroke="#f4f4fa" stroke-width="0.9"/><path d="M783.2,88.2 H791.4" stroke="#b8b8cc" stroke-width="0.4"/><path d="M783.2,156.2 H791.4" stroke="#f4f4fa" stroke-width="0.9"/><path d="M783.2,155.5 H791.4" stroke="#b8b8cc" stroke-width="0.4"/><path d="M783.2,196.8 H791.4" stroke="#f4f4fa" stroke-width="0.9"/><path d="M783.2,196.10000000000002 H791.4" stroke="#b8b8cc" stroke-width="0.4"/><path d="M783.2,220.8 H791.4" stroke="#f4f4fa" stroke-width="0.9"/><path d="M783.2,220.10000000000002 H791.4" stroke="#b8b8cc" stroke-width="0.4"/><path d="M783.2,246.8 H791.4" stroke="#f4f4fa" stroke-width="0.9"/><path d="M783.2,246.10000000000002 H791.4" stroke="#b8b8cc" stroke-width="0.4"/><path d="M783.2,334 H791.4" stroke="#f4f4fa" stroke-width="0.9"/><path d="M783.2,333.3 H791.4" stroke="#b8b8cc" stroke-width="0.4"/><path d="M783.2,356.8 H791.4" stroke="#f4f4fa" stroke-width="0.9"/><path d="M783.2,356.1 H791.4" stroke="#b8b8cc" stroke-width="0.4"/><path d="M783.2,409.6 H791.4" stroke="#f4f4fa" stroke-width="0.9"/><path d="M783.2,408.90000000000003 H791.4" stroke="#b8b8cc" stroke-width="0.4"/><g transform="translate(791,76.2) scale(1)"><path d="M-6,6.2 L-5.2,0 L-1,2 L5.6,3.6 L7,-5.6 L4,-3 L5.4,2.4 L1,5.4 L-2.6,4.4 Z" fill="#f0a050"/><path d="M-6,-4.2 L-1.6,-6.2 L6,-0.8 L5.6,1.4 L1,3.8 L-4.6,0.2 Z" fill="#202024"/><path d="M-3.6,-3.4 L-0.4,-4.4 L1.6,-2.4 L-2.4,-1.4 Z" fill="#d8d8dc"/><path d="M0.4,-0.2 L4.6,-0.8 L4,0.8 L0.6,1.8 Z" fill="#f0f0f4"/><path d="M-2.6,0 L0.2,1.6 L0.8,3.2 L-2,1.6 Z" fill="#b0b4bc"/></g><g transform="translate(790.6,101) scale(1)"><path d="M-4.4,-2.6 L-1.6,-4.8 L4.6,-4.4 V3 L1.6,5 L-4.4,4.6 Z" fill="#e6e6f0" stroke="#b4b4c4" stroke-width="0.6"/><path d="M-4.4,-2.6 L1.6,-2.2 L4.6,-4.4 M1.6,-2.2 V5" stroke="#b4b4c4" stroke-width="0.5" fill="none"/><path d="M-3.4,0 H0.6 M-3.4,2 H0.6" stroke="#b4b4c4" stroke-width="0.6"/></g><g transform="translate(790.6,115.6) scale(1)"><path d="M-4.4,-2.6 L-1.6,-4.8 L4.6,-4.4 V3 L1.6,5 L-4.4,4.6 Z" fill="#e6e6f0" stroke="#b4b4c4" stroke-width="0.6"/><path d="M-4.4,-2.6 L1.6,-2.2 L4.6,-4.4 M1.6,-2.2 V5" stroke="#b4b4c4" stroke-width="0.5" fill="none"/><circle cx="-1.4" cy="1.4" r="1.6" fill="#f4f4f8" stroke="#b4b4c4" stroke-width="0.5"/></g><g transform="translate(790.6,130) scale(1)"><path d="M-4.4,-2.6 L-1.6,-4.8 L4.6,-4.4 V3 L1.6,5 L-4.4,4.6 Z" fill="#e6e6f0" stroke="#b4b4c4" stroke-width="0.6"/><path d="M-4.4,-2.6 L1.6,-2.2 L4.6,-4.4 M1.6,-2.2 V5" stroke="#b4b4c4" stroke-width="0.5" fill="none"/><path d="M-3.4,0 H0.6 M-3.4,2 H0.6" stroke="#b4b4c4" stroke-width="0.6"/></g><g transform="translate(790.6,144.4) scale(1)"><path d="M-4.4,-2.6 L-1.6,-4.8 L4.6,-4.4 V3 L1.6,5 L-4.4,4.6 Z" fill="#e6e6f0" stroke="#b4b4c4" stroke-width="0.6"/><path d="M-4.4,-2.6 L1.6,-2.2 L4.6,-4.4 M1.6,-2.2 V5" stroke="#b4b4c4" stroke-width="0.5" fill="none"/><circle cx="-1.4" cy="1.4" r="1.6" fill="#f4f4f8" stroke="#b4b4c4" stroke-width="0.5"/></g><g transform="translate(790,168.2) scale(1)"><path d="M-2.8,-5 L-2.8,3.6 L-0.6,1.6 L1,5 L2.4,4.4 L0.8,1 L3.6,1 Z" fill="#e8e8f0" stroke="#a8a8b8" stroke-width="0.7"/></g><path d="M795.4,172.7 h4 l-2,2.5 z" fill="#000"/><g transform="translate(790.2,184.4) scale(1)"><path d="M-4.4,-4.4 L4.2,4 M4.2,-4.4 L-4.4,4" stroke="#101010" stroke-width="1.3"/><circle cx="0" cy="0" r="2" fill="#f0d030"/><path d="M-0.6,0.6 L2.6,3.4 L1,4.4 Z" fill="#2080d0"/><circle cx="-4" cy="-4.2" r="1" fill="#101010"/><circle cx="4" cy="-4.2" r="1" fill="#101010"/></g><path d="M795.4,188.7 h4 l-2,2.5 z" fill="#000"/><g transform="translate(790,209) scale(1)"><rect x="-5.4" y="-4" width="9.6" height="8.6" fill="#f8f8ff" stroke="#304890" stroke-width="0.8"/><path d="M-3.6,2.6 L-2,0 L-0.6,1.6 Z" fill="#20a040"/><path d="M-1.4,2 L3.6,-5.2 L5.2,-4 L0.2,3 Z" fill="#3070e0" stroke="#102870" stroke-width="0.4"/></g><path d="M795.4,213.1 h4 l-2,2.5 z" fill="#000"/><g transform="translate(790.4,232.8) scale(1)"><path d="M-5.2,-3.6 Q-1,-5.6 4.4,-2.6 L5.4,1.4 L2.6,5 L-0.4,2 L-4.6,3.6 Z" fill="#f0d8a0"/><path d="M-4.4,-3 Q0,-4.4 4.6,-1.4" stroke="#704010" stroke-width="1.1" fill="none"/><path d="M-2.6,-0.6 Q1,-1.4 3.6,2.6" stroke="#101010" stroke-width="1.2" fill="none"/><path d="M-4.6,1 L-1,0.6 L1.6,4.4" stroke="#c89020" stroke-width="1" fill="none"/><circle cx="-3.6" cy="3.6" r="0.8" fill="#e02020"/><circle cx="3.8" cy="4.6" r="0.8" fill="#e02020"/></g><g transform="translate(790,259) scale(1)"><path d="M-3.6,1.6 Q-5.6,-3.6 -0.6,-4.6 Q3.6,-4.8 4,-1.6" stroke="#2060e0" stroke-width="1.6" fill="none"/><path d="M1.6,-2.4 L4.2,1 L5.6,-2.8 Z" fill="#2060e0"/><path d="M-3.6,-1 Q-3,-3.4 -0.6,-3.4" stroke="#f0e040" stroke-width="0.9" fill="none"/></g><path d="M795.4,264.5 h4 l-2,2.5 z" fill="#000"/><g transform="translate(790,274.4) scale(1)"><rect x="-4.7" y="-4.7" width="2.6" height="2.6" rx="0.8" fill="#2020b0"/><rect x="-4.7" y="-1.3" width="2.6" height="2.6" rx="0.8" fill="#2020b0"/><rect x="-4.7" y="2.0999999999999996" width="2.6" height="2.6" rx="0.8" fill="#2020b0"/><rect x="-1.3" y="-4.7" width="2.6" height="2.6" rx="0.8" fill="#2020b0"/><rect x="-1.3" y="-1.3" width="2.6" height="2.6" rx="0.8" fill="#2020b0"/><rect x="-1.3" y="2.0999999999999996" width="2.6" height="2.6" rx="0.8" fill="#2020b0"/><rect x="2.0999999999999996" y="-4.7" width="2.6" height="2.6" rx="0.8" fill="#2020b0"/><rect x="2.0999999999999996" y="-1.3" width="2.6" height="2.6" rx="0.8" fill="#2020b0"/><rect x="2.0999999999999996" y="2.0999999999999996" width="2.6" height="2.6" rx="0.8" fill="#2020b0"/></g><path d="M795.4,279.7 h4 l-2,2.5 z" fill="#000"/><g transform="translate(790.4,290) scale(1)"><path d="M-5,-1.6 L-1.6,-4.4 L4.4,-3.6 L5.2,0.6 L1.6,4.8 L-4.6,3.4 Z" fill="#e8d048" stroke="#504010" stroke-width="0.6"/><path d="M-3.6,-1 L-0.6,-3 L3.4,-2.4 L0.4,0 Z" fill="#fff8b0"/><path d="M-4.4,1.6 L1.2,2.6 L4.6,-0.6" stroke="#504010" stroke-width="0.6" fill="none"/><circle cx="0.4" cy="-0.6" r="1.6" fill="#e06020"/><path d="M-2,3 H2.4" stroke="#303030" stroke-width="0.8"/></g><g transform="translate(790.4,304.6) scale(1)"><path d="M-5,-1.6 L-1.6,-4.4 L4.4,-3.6 L5.2,0.6 L1.6,4.8 L-4.6,3.4 Z" fill="#e8d048" stroke="#504010" stroke-width="0.6"/><path d="M-3.6,-1 L-0.6,-3 L3.4,-2.4 L0.4,0 Z" fill="#fff8b0"/><path d="M-4.4,1.6 L1.2,2.6 L4.6,-0.6" stroke="#504010" stroke-width="0.6" fill="none"/><path d="M-1.4,0.6 L3.8,-5 L5.2,-3.8 L0,1.8 Z" fill="#2060e0" stroke="#102870" stroke-width="0.4"/></g><path d="M795.4,309.7 h4 l-2,2.5 z" fill="#000"/><g transform="translate(790.4,321) scale(1)"><path d="M-5,-1.6 L-1.6,-4.4 L4.4,-3.6 L5.2,0.6 L1.6,4.8 L-4.6,3.4 Z" fill="#e8d048" stroke="#504010" stroke-width="0.6"/><path d="M-3.6,-1 L-0.6,-3 L3.4,-2.4 L0.4,0 Z" fill="#fff8b0"/><path d="M-4.4,1.6 L1.2,2.6 L4.6,-0.6" stroke="#504010" stroke-width="0.6" fill="none"/><path d="M-2.4,-3.6 Q0,-6 2.4,-4" stroke="#505050" stroke-width="0.9" fill="none"/><rect x="-1.6" y="0.6" width="3.6" height="2.6" fill="#fff8b0" stroke="#504010" stroke-width="0.4"/></g><path d="M795.4,325.9 h4 l-2,2.5 z" fill="#000"/><g transform="translate(790.6,344.6) scale(1)"><rect x="-5.4" y="-5.4" width="10.8" height="10.8" fill="#e8e8f4"/><path d="M-5,-5.2 V5 H5.4" stroke="#404050" stroke-width="0.7" fill="none"/><path d="M-5,4.6 Q-2,-5.6 1,-4 Q3.6,-2 5,3.4" stroke="#2858e0" stroke-width="0.9" fill="none"/><path d="M-4.6,4.6 L5,-3.6" stroke="#e8d820" stroke-width="1"/></g><g transform="translate(790.8,368.2) scale(1)"><path d="M-5.4,1.6 Q0,-2.4 5.4,1.6 L3.6,3.8 Q0,1 -3.6,3.8 Z" fill="#f08828" stroke="#904010" stroke-width="0.5"/><path d="M-3.4,-2.4 Q0,-5.4 3.4,-2.4 L2.4,0 Q0,-1.8 -2.4,0 Z" fill="#3080f0" stroke="#1040a0" stroke-width="0.5"/><circle cx="0" cy="-1" r="1.1" fill="#e02020"/></g><g transform="translate(790.8,383) scale(1)"><path d="M-5,-1.4 Q0,-6.4 5,-1.4 L3.6,0.4 Q0,-3 -3.6,0.4 Z" fill="#40d0f0" stroke="#1858c8" stroke-width="0.6"/><path d="M-5,3.4 Q0,-0.6 5,3.4 L3.8,5.2 Q0,2.4 -3.8,5.2 Z" fill="#3080f0" stroke="#1040a0" stroke-width="0.5"/><path d="M0,-2.6 V3" stroke="#101010" stroke-width="1"/><path d="M-1.4,-1.8 L0,-3.6 L1.4,-1.8 Z M-1.4,2.2 L0,4 L1.4,2.2 Z" fill="#101010"/></g><g transform="translate(790.8,397.8) scale(1)"><path d="M-5,3.4 Q0,-1.6 5,3.4 L3.8,5.2 Q0,1.6 -3.8,5.2 Z" fill="#40d0f0" stroke="#1858c8" stroke-width="0.6"/><path d="M-4.2,1.2 Q0,-2.6 4.2,1.2" stroke="#3080f0" stroke-width="1.2" fill="none"/><path d="M-4.8,-2.6 L4.8,-5" stroke="#101010" stroke-width="0.8"/><path d="M0,-3.6 V1" stroke="#101010" stroke-width="0.9"/></g><path d="M794.6,411.6 l1.4,1.4 l-1.4,1.4 M796.6,411.6 l1.4,1.4 l-1.4,1.4" stroke="#8888a0" stroke-width="0.6" fill="none"/><path d="M780.2,419.5 L784.6,419.7 Q783.6,421.6 781.4,423.4" stroke="#e03040" stroke-width="1.3" fill="none" stroke-linejoin="round"/><path d="M787.4,423.6 Q783.6,423 783.6,425.2 Q783.8,426.4 785.4,426.8 Q787,427.4 786,428.8 Q785,429.8 782.6,429.6" stroke="#f0a020" stroke-width="1.3" fill="none"/><path d="M778.4,424.6 Q782.6,424.2 781.6,427 Q780.4,430.2 776.4,430.2 Z" stroke="#5030a0" stroke-width="1.2" fill="none" stroke-linejoin="round"/></svg><span style="position:absolute;left:168.2px;top:422.80px;font-size:10px;line-height:12px;color:#000;font-weight:700;white-space:pre;transform:scaleX(0.6811);transform-origin:0 0;"><span style="font-family:'Liberation Serif',serif;font-style:italic">f</span><span style="font-size:5.5px;font-weight:700">(x)</span></span><span style="position:absolute;left:148.4px;top:422.15px;font-size:10.5px;line-height:12.5px;color:#1828b0;font-weight:700;white-space:pre;transform:scaleX(0.7474);transform-origin:0 0;">?</span><span style="position:absolute;left:414.2px;top:423.55px;font-size:8.5px;line-height:10.5px;color:#202020;font-weight:700;white-space:pre;transform:scaleX(0.8072);transform-origin:0 0;">?</span><span style="position:absolute;left:613.6px;top:422.50px;font-size:5.4px;line-height:7.4px;color:#303090;font-weight:700;white-space:pre;transform:scaleX(0.7358);transform-origin:0 0;">ABC</span><span style="position:absolute;left:786.6px;top:260.00px;font-size:4px;line-height:6px;color:#2040c0;font-weight:700;white-space:pre;transform:scaleX(0.8270);transform-origin:0 0;">XN</span><span style="position:absolute;left:779.3px;top:429.60px;font-size:4.2px;line-height:6.2px;color:#5030a0;font-weight:700;white-space:pre;transform:scaleX(1.3297);transform-origin:0 0;font-style:italic;">CATIA</span><div class="combo" style="position:absolute;left:205.5px;top:26.6px;width:85.6px;height:12.0px;background:#e2e2e6;border:0.7px solid #b4b4c0;"></div><svg style="position:absolute;left:284.0px;top:31.0px;" width="5" height="4" viewBox="0 0 5 4"><path d="M0.4,0.6 L2.4,2.8 L4.4,0.6" stroke="#505050" stroke-width="0.7" fill="none"/></svg><span style="position:absolute;left:207.6px;top:28.00px;font-size:7.6px;line-height:9.6px;color:#101018;font-weight:400;white-space:pre;transform:scaleX(0.7876);transform-origin:0 0;">Switch Bezel Solid</span><div class="combo" style="position:absolute;left:22.3px;top:47.099999999999994px;width:33.800000000000004px;height:12.8px;background:#ffffff;border:0.7px solid #b0b0c0;"></div><svg style="position:absolute;left:48.5px;top:51.9px;" width="5" height="4" viewBox="0 0 5 4"><path d="M0.4,0.6 L2.4,2.8 L4.4,0.6" stroke="#505050" stroke-width="0.7" fill="none"/></svg><div style="position:absolute;left:25.4px;top:49.2px;width:17.2px;height:8px;background:#f0ffa4;border-top:0.7px solid #6c6c6c;border-left:0.7px solid #8c8c8c;"></div><div class="combo" style="position:absolute;left:56.7px;top:47.099999999999994px;width:33.800000000000004px;height:12.8px;background:#e4e4e8;border:0.7px solid #b4b4c0;"></div><svg style="position:absolute;left:83.6px;top:51.9px;" width="5" height="4" viewBox="0 0 5 4"><path d="M0.4,0.6 L2.4,2.8 L4.4,0.6" stroke="#505050" stroke-width="0.7" fill="none"/></svg><span style="position:absolute;left:59.3px;top:48.50px;font-size:7.8px;line-height:9.8px;color:#202028;font-weight:400;white-space:pre;transform:scaleX(0.6816);transform-origin:0 0;">100%</span><div class="combo" style="position:absolute;left:91.9px;top:47.099999999999994px;width:33.4px;height:12.8px;background:#ffffff;border:0.7px solid #b0b0c0;"></div><svg style="position:absolute;left:118.19999999999999px;top:51.9px;" width="5" height="4" viewBox="0 0 5 4"><path d="M0.4,0.6 L2.4,2.8 L4.4,0.6" stroke="#505050" stroke-width="0.7" fill="none"/></svg><div style="position:absolute;left:94.6px;top:52.9px;width:20.4px;height:1.4px;background:#101010;"></div><div class="combo" style="position:absolute;left:126.5px;top:47.099999999999994px;width:33.800000000000004px;height:12.8px;background:#ffffff;border:0.7px solid #b0b0c0;"></div><svg style="position:absolute;left:153.29999999999998px;top:51.9px;" width="5" height="4" viewBox="0 0 5 4"><path d="M0.4,0.6 L2.4,2.8 L4.4,0.6" stroke="#505050" stroke-width="0.7" fill="none"/></svg><div style="position:absolute;left:131px;top:53.4px;width:19.2px;height:0.6px;background:#404048;"></div><div class="combo" style="position:absolute;left:160.89999999999998px;top:47.099999999999994px;width:22.8px;height:12.8px;background:#f4f4f6;border:0.7px solid #d0d0dc;"></div><svg style="position:absolute;left:176.6px;top:51.9px;" width="5" height="4" viewBox="0 0 5 4"><path d="M0.4,0.6 L2.4,2.8 L4.4,0.6" stroke="#b0b0b8" stroke-width="0.7" fill="none"/></svg><div style="position:absolute;left:161.5px;top:47.7px;width:11.4px;height:11.6px;background:#e6e6ea;"></div><svg style="position:absolute;left:164.6px;top:51px;" width="5" height="5" viewBox="0 0 5 5"><path d="M0.4,0.4 L4.6,4.6 M4.6,0.4 L0.4,4.6" stroke="#505058" stroke-width="0.6"/></svg><div class="combo" style="position:absolute;left:185.1px;top:47.099999999999994px;width:21.8px;height:12.8px;background:#ffffff;border:0.7px solid #b0b0c0;"></div><svg style="position:absolute;left:200.1px;top:51.9px;" width="5" height="4" viewBox="0 0 5 4"><path d="M0.4,0.6 L2.4,2.8 L4.4,0.6" stroke="#505050" stroke-width="0.7" fill="none"/></svg><svg style="position:absolute;left:189.4px;top:50.8px;" width="5" height="6" viewBox="0 0 5 6"><path d="M0.6,0.4 H3 L4.4,1.8 V5.4 H0.6 Z" fill="#fff" stroke="#3858c0" stroke-width="0.6"/><rect x="1" y="3" width="2.2" height="2.2" fill="#6090f0"/></svg><div class="combo" style="position:absolute;left:207.7px;top:47.099999999999994px;width:34.0px;height:12.8px;background:#ffffff;border:0.7px solid #b0b0c0;"></div><svg style="position:absolute;left:234.2px;top:51.9px;" width="5" height="4" viewBox="0 0 5 4"><path d="M0.4,0.6 L2.4,2.8 L4.4,0.6" stroke="#505050" stroke-width="0.7" fill="none"/></svg><span style="position:absolute;left:209.8px;top:48.50px;font-size:7.8px;line-height:9.8px;color:#101018;font-weight:400;white-space:pre;transform:scaleX(0.8047);transform-origin:0 0;">None</span><span style="position:absolute;left:1.4px;top:438.70px;font-size:8px;line-height:10px;color:#1c1c28;font-weight:400;white-space:pre;transform:scaleX(0.7690);transform-origin:0 0;">Select the surfaces on which the analysis is to be displayed/removed</span><div id="power-input" style="position:absolute;left:608.4px;top:439px;width:156.4px;height:9.4px;background:#ffffff;border:0.6px solid #b0b0c4;"></div><div style="position:absolute;left:766px;top:439px;width:14.4px;height:9.4px;background:#c8c8dc;border:0.6px solid #f0f0f8;"></div><div style="position:absolute;left:782.6px;top:439px;width:17.4px;height:9.4px;background:#c8c8dc;border:0.6px solid #f0f0f8;"></div><svg style="position:absolute;left:766px;top:439px;" width="34" height="10" viewBox="0 0 34 10"><rect x="4.6" y="2.4" width="4.4" height="4" fill="none" stroke="#a0a0b4" stroke-width="0.7"/><path d="M9,6.4 h1.6" stroke="#a0a0b4" stroke-width="0.7"/><rect x="22.4" y="2.6" width="5" height="4.2" fill="none" stroke="#a0a0b4" stroke-width="0.7"/><circle cx="25" cy="4.6" r="1.2" fill="none" stroke="#a0a0b4" stroke-width="0.6"/></svg><div style="position:absolute;left:0px;top:448.8px;width:800px;height:1.2px;background:#1c2a48;"></div>
<!-- Draft Analysis dialog -->
<div id="draft-dialog" style="position:absolute;left:665.3px;top:162.1px;width:82.3px;height:151.2px;background:#fbe8c6;border:0.7px solid #30303a;border-top:none;"><div class="dlg-title" style="position:absolute;left:-0.7px;top:0;width:82.3px;height:12.5px;background:#3b3b3d;"></div></div><span style="position:absolute;left:667.6px;top:163.50px;font-size:7.8px;line-height:9.8px;color:#ffffff;font-weight:400;white-space:pre;transform:scaleX(0.7845);transform-origin:0 0;">Draft An...</span><span style="position:absolute;left:708.8px;top:163.70px;font-size:7.6px;line-height:9.6px;color:#ffffff;font-weight:400;white-space:pre;transform:scaleX(0.8030);transform-origin:0 0;">?</span><svg style="position:absolute;left:731.6px;top:165.8px;" width="6" height="6" viewBox="0 0 6 6"><path d="M0.6,0.6 L5.2,5.2 M5.2,0.6 L0.6,5.2" stroke="#fff" stroke-width="0.7"/></svg><div class="group" style="position:absolute;left:670.6px;top:183.8px;width:71px;height:20.8px;border:0.6px solid #dcd2bc;box-shadow:0.6px 0.6px 0 #fff8ea;"></div><div style="position:absolute;left:675.2px;top:181.8px;width:19.4px;height:5px;background:#fbe8c6;"></div><span style="position:absolute;left:676.6px;top:179.30px;font-size:7.4px;line-height:9.4px;color:#14100c;font-weight:400;white-space:pre;transform:scaleX(0.8649);transform-origin:0 0;">Mode</span><div class="btn" style="position:absolute;left:671.6px;top:190px;width:14.1px;height:14px;background:#fdf0da;border-top:0.8px solid #8a8270;border-left:0.8px solid #8a8270;border-right:0.8px solid #fffdf6;border-bottom:0.8px solid #fffdf6;"></div><div class="btn" style="position:absolute;left:685.7px;top:190px;width:15px;height:14px;background:#fbe8c6;border-top:0.8px solid #fffdf6;border-left:0.8px solid #fffdf6;border-right:0.8px solid #9a927e;border-bottom:0.8px solid #9a927e;"></div><svg style="position:absolute;left:671.6px;top:190px;" width="30" height="14" viewBox="0 0 30 14"><rect x="4.4" y="3" width="3" height="3.6" fill="#ff1010"/><rect x="4.4" y="6.6" width="3" height="3.8" fill="#10e020"/><path d="M7.4,5.6 L9.6,6.8 L7.4,8 Z" fill="#1020c0"/><defs><linearGradient id="rb" x1="0" y1="0" x2="0" y2="1"><stop offset="0" stop-color="#e01010"/><stop offset="0.25" stop-color="#f0e020"/><stop offset="0.5" stop-color="#20e0a0"/><stop offset="0.7" stop-color="#20b0f0"/><stop offset="1" stop-color="#1818c0"/></linearGradient></defs><rect x="19" y="2.2" width="3.2" height="9.4" fill="url(#rb)" stroke="#403020" stroke-width="0.4"/></svg><div class="group" style="position:absolute;left:670.6px;top:209.8px;width:71px;height:21px;border:0.6px solid #dcd2bc;box-shadow:0.6px 0.6px 0 #fff8ea;"></div><div style="position:absolute;left:675.2px;top:207.8px;width:22.599999999999998px;height:5px;background:#fbe8c6;"></div><span style="position:absolute;left:676.6px;top:205.30px;font-size:7.4px;line-height:9.4px;color:#14100c;font-weight:400;white-space:pre;transform:scaleX(0.7923);transform-origin:0 0;">Display</span><div class="btn" style="position:absolute;left:671.6px;top:215.4px;width:14.3px;height:14px;background:#8c8c8c;border-top:0.8px solid #8a8270;border-left:0.8px solid #8a8270;border-right:0.8px solid #fffdf6;border-bottom:0.8px solid #fffdf6;"></div><div class="btn" style="position:absolute;left:685.9px;top:215.4px;width:14.6px;height:14px;background:#f4e6cc;border-top:0.8px solid #8a8270;border-left:0.8px solid #8a8270;border-right:0.8px solid #fffdf6;border-bottom:0.8px solid #fffdf6;"></div><div class="btn" style="position:absolute;left:700.5px;top:215.4px;width:14.6px;height:14px;background:#fbe8c6;border-top:0.8px solid #fffdf6;border-left:0.8px solid #fffdf6;border-right:0.8px solid #9a927e;border-bottom:0.8px solid #9a927e;"></div><div class="btn" style="position:absolute;left:715.1px;top:215.4px;width:14.6px;height:14px;background:#fbe8c6;border-top:0.8px solid #fffdf6;border-left:0.8px solid #fffdf6;border-right:0.8px solid #9a927e;border-bottom:0.8px solid #9a927e;"></div><svg style="position:absolute;left:671.6px;top:215.4px;" width="60" height="14" viewBox="0 0 60 14"><defs><linearGradient id="rb2" x1="0" y1="0" x2="0" y2="1"><stop offset="0" stop-color="#ff3020"/><stop offset="0.35" stop-color="#f0e040"/><stop offset="0.7" stop-color="#30c0f0"/><stop offset="1" stop-color="#2030d0"/></linearGradient></defs><rect x="3.2" y="2.4" width="1.4" height="9.4" fill="url(#rb2)"/><rect x="4.4" y="2.4" width="3.2" height="9.4" fill="#fafafa"/><rect x="7.6" y="2.4" width="3" height="9.4" fill="#585858"/><ellipse cx="21.6" cy="9" rx="3.6" ry="1.8" fill="#c8a8a8" stroke="#705060" stroke-width="0.5"/><path d="M18.6,3.4 L22,8.6" stroke="#e03030" stroke-width="0.7"/><circle cx="18.6" cy="3.2" r="0.9" fill="#20b0c0"/><path d="M21,5.4 H25" stroke="#f8f8f8" stroke-width="1"/><path d="M34,4 L40,2.4 L40.6,9.4 L35,11 Z" fill="#f8d020"/><path d="M35.4,6.4 L39.6,5 L40,8 L36,9.4 Z" fill="#f03020"/><path d="M32,3.4 L42,10.4 M32,10.6 L42,3.6 M31.6,7 H42.4" stroke="#101010" stroke-width="1"/><circle cx="50.8" cy="6" r="2.4" fill="#f8f040" stroke="#403810" stroke-width="0.6"/><rect x="49.8" y="8.2" width="2" height="2.2" fill="#3040c0"/></svg><div class="group" style="position:absolute;left:670.6px;top:235.2px;width:71px;height:21.2px;border:0.6px solid #dcd2bc;box-shadow:0.6px 0.6px 0 #fff8ea;"></div><div style="position:absolute;left:675.2px;top:233.2px;width:28.0px;height:5px;background:#fbe8c6;"></div><span style="position:absolute;left:676.6px;top:230.70px;font-size:7.4px;line-height:9.4px;color:#14100c;font-weight:400;white-space:pre;transform:scaleX(0.8433);transform-origin:0 0;">Direction</span><div class="btn" style="position:absolute;left:671.6px;top:241px;width:14.1px;height:14px;background:#f6e8d0;border-top:0.8px solid #8a8270;border-left:0.8px solid #8a8270;border-right:0.8px solid #fffdf6;border-bottom:0.8px solid #fffdf6;"></div><div class="btn" style="position:absolute;left:685.7px;top:241px;width:14.4px;height:14px;background:#ffffff;border-top:0.8px solid #8a8270;border-left:0.8px solid #8a8270;border-right:0.8px solid #fffdf6;border-bottom:0.8px solid #fffdf6;"></div><div class="btn" style="position:absolute;left:700.1px;top:241px;width:14.6px;height:14px;background:#fbe8c6;border-top:0.8px solid #fffdf6;border-left:0.8px solid #fffdf6;border-right:0.8px solid #9a927e;border-bottom:0.8px solid #9a927e;"></div><svg style="position:absolute;left:671.6px;top:241px;" width="45" height="14" viewBox="0 0 45 14"><rect x="2" y="2" width="6" height="7" fill="none" stroke="#e06060" stroke-width="0.7"/><path d="M4.4,6.6 V4.6 Q6.4,2 8.4,4.6 V6.6" stroke="#606060" stroke-width="1" fill="none"/><rect x="3.4" y="6.4" width="6.4" height="5" fill="#f0d848" stroke="#504010" stroke-width="0.5"/><rect x="7.6" y="7" width="3.6" height="4.6" fill="#909090" stroke="#404040" stroke-width="0.4"/><path d="M21.4,2.8 V11.4" stroke="#2030c0" stroke-width="1.1"/><path d="M19.2,5 L21.4,2 L23.6,5 Z" fill="#2030c0"/><path d="M18.2,8 L21.4,5.4 L24.6,8 Z" fill="#2858e0"/><ellipse cx="21.4" cy="10" rx="3.4" ry="1.3" fill="#3070f0"/><circle cx="21.4" cy="11" r="0.6" fill="#e02020"/><path d="M30.6,9.6 L34.4,4.4 L41,5.6 L37.6,11 Z" fill="#20a8a0"/><path d="M32.6,8.6 L35,5.6 L39,6.4 L37,9.6 Z" fill="#30d030"/><path d="M34,7 L38.4,8.6" stroke="#2040d0" stroke-width="0.8"/><path d="M33,3.4 l1.6,-1.6 l1.6,1.6 Z" fill="#f0e020"/><circle cx="33" cy="5" r="0.7" fill="#e02020"/><circle cx="38" cy="10.8" r="0.7" fill="#e02020"/></svg><div class="group" style="position:absolute;left:670.6px;top:260.6px;width:71px;height:32.8px;border:0.6px solid #dcd2bc;box-shadow:0.6px 0.6px 0 #fff8ea;"></div><div style="position:absolute;left:675.2px;top:258.6px;width:34.2px;height:5px;background:#fbe8c6;"></div><span style="position:absolute;left:676.6px;top:256.10px;font-size:7.4px;line-height:9.4px;color:#14100c;font-weight:400;white-space:pre;transform:scaleX(0.8328);transform-origin:0 0;">Information</span><span style="position:absolute;left:672.3px;top:266.40px;font-size:7.2px;line-height:9.2px;color:#1a1610;font-weight:400;white-space:pre;transform:scaleX(0.8081);transform-origin:0 0;">Dir X : -0.05</span><span style="position:absolute;left:672.3px;top:275.30px;font-size:7.2px;line-height:9.2px;color:#1a1610;font-weight:400;white-space:pre;transform:scaleX(0.8067);transform-origin:0 0;">Dir Y : 0.07</span><span style="position:absolute;left:672.3px;top:284.00px;font-size:7.2px;line-height:9.2px;color:#1a1610;font-weight:400;white-space:pre;transform:scaleX(0.7986);transform-origin:0 0;">Dir Z : 1.00</span><svg style="position:absolute;left:666.4px;top:300px;" width="18" height="13" viewBox="0 0 18 13"><defs><radialGradient id="dc" cx="0" cy="1" r="1"><stop offset="0" stop-color="#182848"/><stop offset="0.45" stop-color="#7090b8"/><stop offset="0.75" stop-color="#f0e8d8"/><stop offset="1" stop-color="#fbe8c6" stop-opacity="0"/></radialGradient></defs><rect x="0" y="2" width="15" height="11" fill="url(#dc)"/></svg><div class="pushbtn" style="position:absolute;left:670.4px;top:299px;width:34.6px;height:9px;background:#d2d2ea;border-top:0.7px solid #ffffff;border-left:0.7px solid #ffffff;border-right:0.9px solid #6a6a80;border-bottom:0.9px solid #6a6a80;"></div><div class="pushbtn" style="position:absolute;left:708.7px;top:299px;width:34px;height:9px;background:#d2d2ea;border-top:0.7px solid #ffffff;border-left:0.7px solid #ffffff;border-right:0.9px solid #6a6a80;border-bottom:0.9px solid #6a6a80;"></div><svg style="position:absolute;left:670px;top:299px;" width="75" height="9" viewBox="0 0 75 9"><circle cx="6.6" cy="4.6" r="2.3" fill="#10a020"/><circle cx="6" cy="4" r="1" fill="#80f080"/><circle cx="44.8" cy="4.6" r="2.3" fill="#d01818"/><circle cx="44.2" cy="4" r="1" fill="#ff9090"/></svg><span style="position:absolute;left:687.4px;top:299.00px;font-size:7.2px;line-height:9.2px;color:#101018;font-weight:400;white-space:pre;transform:scaleX(0.7892);transform-origin:0 0;">OK</span><span style="position:absolute;left:720px;top:299.00px;font-size:7.2px;line-height:9.2px;color:#101018;font-weight:400;white-space:pre;transform:scaleX(0.8492);transform-origin:0 0;">Cancel</span>
<!-- colour scale window -->
<div id="scale-window" style="position:absolute;left:692.7px;top:343.1px;width:80px;height:66.5px;background:#fce4b8;"><div class="dlg-title" style="position:absolute;left:0;top:0;width:80px;height:15.5px;background:#3b3b3d;"></div><div style="position:absolute;left:6px;top:21.9px;width:67.6px;height:39px;background:#000000;"></div></div><svg style="position:absolute;left:692.7px;top:343.1px;" width="80" height="67" viewBox="0 0 80 67"><path d="M4.6,5.6 V10" stroke="#3878c8" stroke-width="0.8"/><path d="M15.6,7.8 H20.6" stroke="#e8e8e8" stroke-width="0.8"/><rect x="39.6" y="5.6" width="4.6" height="4.6" fill="none" stroke="#707074" stroke-width="0.6"/><path d="M64.4,5.4 L69.2,10.2 M69.2,5.4 L64.4,10.2" stroke="#f4f4f4" stroke-width="0.8"/><defs><radialGradient id="dc2" cx="0" cy="1" r="1"><stop offset="0" stop-color="#101830"/><stop offset="0.4" stop-color="#5080b0"/><stop offset="0.7" stop-color="#f4ead8"/><stop offset="1" stop-color="#fce4b8" stop-opacity="0"/></radialGradient></defs><rect x="0" y="53" width="24" height="13.5" fill="url(#dc2)"/><rect x="6" y="53" width="18" height="7.9" fill="#000"/><rect x="19.9" y="25.2" width="3.5" height="8.7" fill="#10e010"/><rect x="19.9" y="35.8" width="3.5" height="8.4" fill="#1818f0"/><rect x="19.9" y="46" width="3.5" height="8.6" fill="#f01010"/><path d="M25.2,35.3 h2 " stroke="#208888" stroke-width="0.7"/><path d="M25.2,45.4 h2" stroke="#10c010" stroke-width="0.7"/></svg><div style="position:absolute;left:723.2px;top:372.6px;width:18.8px;height:7px;background:#08e0e0;"></div><span style="position:absolute;left:724px;top:372.20px;font-size:6px;line-height:8px;color:rgba(0,0,20,0.8);font-weight:400;white-space:pre;transform:scaleX(0.9477);transform-origin:0 0;">2.9deg</span><div style="position:absolute;left:723.2px;top:382.9px;width:14.1px;height:6.9px;background:#10f010;"></div><span style="position:absolute;left:724px;top:382.50px;font-size:6px;line-height:8px;color:rgba(0,10,0,0.8);font-weight:400;white-space:pre;transform:scaleX(0.9581);transform-origin:0 0;">0deg</span><span style="position:absolute;left:772.4px;top:396.10px;font-size:7px;line-height:9px;color:#b8b8d8;font-weight:400;white-space:pre;transform:scaleX(1.0286);transform-origin:0 0;">x</span>
</div>
</body>
</html>
